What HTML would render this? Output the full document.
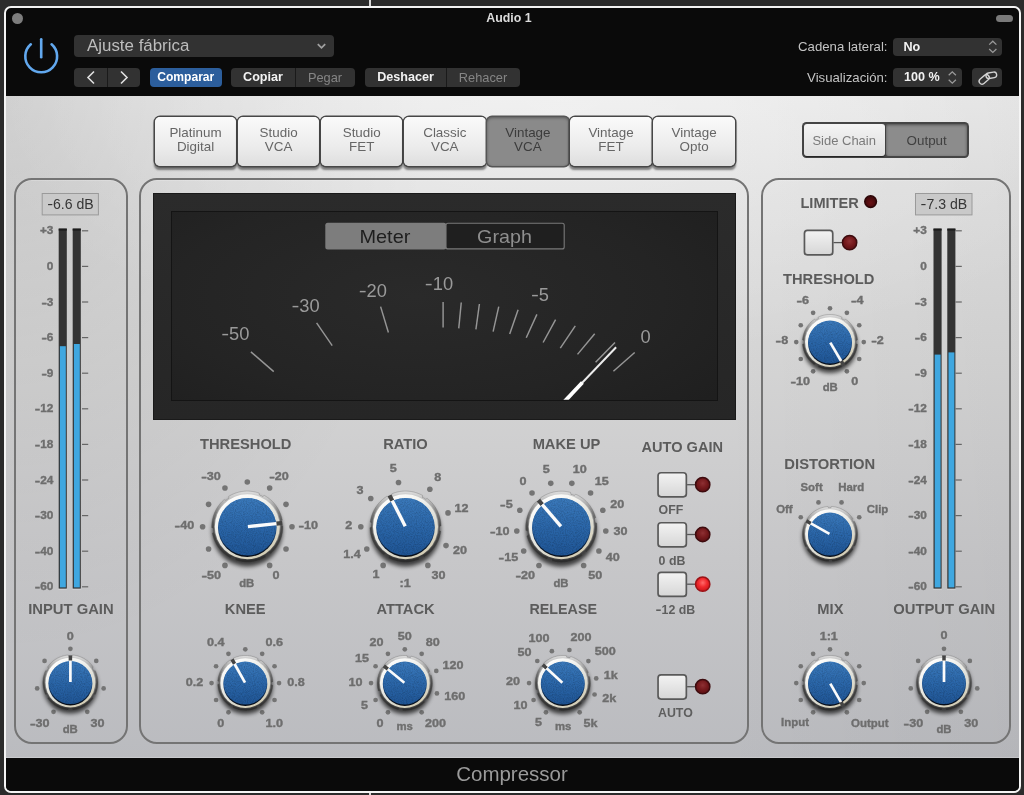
<!DOCTYPE html><html><head><meta charset="utf-8"><title>Compressor</title><style>
html,body{margin:0;padding:0;}
body{will-change:transform;}
svg.abs{will-change:transform;}
body{width:1024px;height:795px;overflow:hidden;background:#2b2b2b;font-family:"Liberation Sans",sans-serif;position:relative;}
.abs{position:absolute;}
#win{position:absolute;left:4px;top:6px;width:1013px;height:783px;border:2px solid #f4f4f4;border-radius:7px;background:#0a0a0a;overflow:hidden;}
#body{position:absolute;left:6px;top:96px;width:1013px;height:661.5px;box-shadow:inset 0 -1px 0 rgba(255,255,255,0.22);background:radial-gradient(ellipse 42% 85% at 0% 0%,rgba(0,0,0,0.11) 0%,rgba(0,0,0,0.05) 45%,rgba(0,0,0,0) 100%),linear-gradient(90deg,rgba(0,0,0,0) 70%,rgba(0,0,0,0.03) 100%),linear-gradient(180deg,#e9e9e9 0%,#e1e1e1 12%,#d5d5d5 40%,#c7c7c9 70%,#babbbf 100%);}
#bodyhl{position:absolute;left:6px;top:96px;width:1013px;height:661.5px;background:radial-gradient(ellipse 60% 40% at 55% 0%,rgba(255,255,255,0.35),rgba(255,255,255,0) 100%);}
.panel{position:absolute;border:2px solid #747474;border-radius:18px;box-sizing:border-box;box-shadow:inset 0 1px 0.5px rgba(255,255,255,0.2);}
.hb{position:absolute;background:#323232;border-radius:4px;color:#9a9a9a;font-size:12.6px;line-height:19px;height:19px;text-align:center;font-weight:bold;}
.tb{position:absolute;top:116.5px;height:49px;width:81.5px;box-sizing:border-box;border-radius:5px;background:linear-gradient(180deg,#fafafa,#ececec 60%,#dedede);color:#666;font-size:13.4px;line-height:14.2px;text-align:center;padding-top:9.3px;box-shadow:0 0 0 1.5px #474747, 0 3px 2px 0.5px rgba(0,0,0,0.45);}
.tb.on{background:#8a8a8a;color:#3c3c3c;box-shadow:0 0 0 1.5px #555, inset 0 1px 3px rgba(0,0,0,0.35);}
</style></head><body>
<div class="abs" style="left:369px;top:0;width:1.5px;height:6px;background:#d8d8d8"></div>
<div class="abs" style="left:369px;top:793px;width:1.5px;height:2px;background:#d8d8d8"></div>
<div id="win"></div>
<div id="body"></div><div id="bodyhl"></div>
<div class="abs" style="left:11.5px;top:12.5px;width:11px;height:11px;border-radius:50%;background:#7d7d7d"></div>
<div class="abs" style="left:995.5px;top:14.5px;width:17.5px;height:7px;border-radius:3.5px;background:#7a7a7a"></div>
<div class="abs" style="left:486px;top:10px;width:46px;text-align:center;color:#dcdcdc;font-size:12.4px;font-weight:bold;line-height:16px;white-space:nowrap">Audio 1</div>
<div class="abs" style="left:74px;top:35px;width:259.5px;height:22px;background:#323232;border-radius:4px;color:#bdbdbd;font-size:16.9px;line-height:22px;"><span style="position:absolute;left:13px;top:0">Ajuste fábrica</span></div>
<div class="hb" style="left:74px;top:68px;width:66px;"></div>
<div class="abs" style="left:106.5px;top:68px;width:1px;height:19px;background:#1a1a1a"></div>
<div class="hb" style="left:150px;top:68px;width:71.5px;background:#2c5e9c;color:#fff;font-size:12.1px">Comparar</div>
<div class="hb" style="left:231px;top:68px;width:124px;"></div>
<div class="hb" style="left:231px;top:68px;width:64px;background:none;color:#f2f2f2;">Copiar</div>
<div class="hb" style="left:295px;top:68px;width:60px;background:none;color:#858585;font-weight:normal;font-size:12.8px">Pegar</div>
<div class="abs" style="left:295px;top:68px;width:1px;height:19px;background:#1a1a1a"></div>
<div class="hb" style="left:365px;top:68px;width:155px;"></div>
<div class="hb" style="left:365px;top:68px;width:81px;background:none;color:#f2f2f2;">Deshacer</div>
<div class="hb" style="left:446px;top:68px;width:74px;background:none;color:#858585;font-weight:normal;font-size:12.8px">Rehacer</div>
<div class="abs" style="left:446px;top:68px;width:1px;height:19px;background:#1a1a1a"></div>
<div class="abs" style="left:760px;top:38px;width:127.5px;text-align:right;color:#c4c4c4;font-size:13.2px;line-height:18px;white-space:nowrap">Cadena lateral:</div>
<div class="abs" style="left:760px;top:68.5px;width:127.5px;text-align:right;color:#c4c4c4;font-size:13.2px;line-height:18px;white-space:nowrap">Visualización:</div>
<div class="hb" style="left:893px;top:37.5px;width:109px;height:18.5px;text-align:left;color:#f2f2f2;"><span style="position:absolute;left:10.5px;top:0">No</span></div>
<div class="hb" style="left:893px;top:68px;width:69px;text-align:left;color:#f2f2f2;"><span style="position:absolute;left:11px;top:0">100 %</span></div>
<div class="hb" style="left:972px;top:68px;width:30px;"></div>
<div class="tb" style="left:154.75px">Platinum<br>Digital</div>
<div class="tb" style="left:237.85px">Studio<br>VCA</div>
<div class="tb" style="left:320.95px">Studio<br>FET</div>
<div class="tb" style="left:404.05px">Classic<br>VCA</div>
<div class="tb on" style="left:487.15px">Vintage<br>VCA</div>
<div class="tb" style="left:570.25px">Vintage<br>FET</div>
<div class="tb" style="left:653.35px">Vintage<br>Opto</div>
<div class="abs" style="left:801.7px;top:122px;width:167.6px;height:36px;border-radius:4.5px;background:#454545;"></div>
<div class="abs" style="left:803.7px;top:124px;width:81px;height:32px;border-radius:3px;background:linear-gradient(180deg,#f4f4f4,#dedede);color:#7a7a7a;font-size:13px;line-height:33px;text-align:center;box-shadow:0 1px 1px rgba(0,0,0,0.5)">Side Chain</div>
<div class="abs" style="left:886px;top:124px;width:81.3px;height:32px;border-radius:2px;background:#8c8c8c;color:#404040;font-size:13.4px;line-height:33px;text-align:center;box-shadow:inset 0 1px 3px rgba(0,0,0,0.45)">Output</div>
<div class="panel" style="left:14px;top:177.7px;width:114px;height:566.5px;"></div>
<div class="panel" style="left:139.3px;top:177.7px;width:609.6px;height:566.5px;"></div>
<div class="panel" style="left:760.7px;top:177.7px;width:250.4px;height:566.5px;"></div>
<div class="abs" style="left:152.8px;top:193px;width:582.8px;height:227.3px;background:linear-gradient(180deg,#2b2b2b,#262626);box-shadow:0 0 0 1px #1a1a1a inset;"></div>
<div class="abs" style="left:171.6px;top:211.6px;width:545.6px;height:188.4px;background:radial-gradient(ellipse 75% 90% at 45% 45%,#2a2a2a 0%,#242424 60%,#1e1e1e 100%);box-shadow:0 0 0 1px #141414;"></div>
<div class="abs" style="left:6px;top:757.5px;width:1013px;height:33.5px;background:#0a0a0a;border-radius:0 0 5px 5px;"></div>
<div class="abs" style="left:412px;top:762px;width:200px;text-align:center;color:#9a9a9a;font-size:20.5px;line-height:24px;">Compressor</div>
<svg class="abs" style="left:0;top:0" width="1024" height="795" viewBox="0 0 1024 795" font-family='"Liberation Sans", sans-serif'>
<defs>
<filter id="blur3" x="-50%" y="-50%" width="200%" height="200%"><feGaussianBlur stdDeviation="2.2"/></filter>
<filter id="grain" x="0" y="0" width="100%" height="100%"><feTurbulence type="fractalNoise" baseFrequency="0.9" numOctaves="2" seed="3" result="n"/><feColorMatrix type="matrix" values="0 0 0 0 0  0 0 0 0 0  0 0 0 0 0  0.6 0 0 0 -0.22" in="n" result="a"/><feComposite in="a" in2="SourceGraphic" operator="in"/></filter>
<linearGradient id="silver" x1="0" y1="0" x2="0" y2="1"><stop offset="0" stop-color="#dedede"/><stop offset="0.12" stop-color="#c2c2c2"/><stop offset="0.3" stop-color="#7a7a7a"/><stop offset="0.5" stop-color="#4a4a4a"/><stop offset="0.8" stop-color="#3a3a3a"/><stop offset="1" stop-color="#2a2a2a"/></linearGradient>
<linearGradient id="silverIn" x1="0" y1="0" x2="0" y2="1"><stop offset="0" stop-color="#cfcfcf"/><stop offset="1" stop-color="#3c3c3c"/></linearGradient>
<linearGradient id="cream" x1="0.2" y1="0" x2="0.8" y2="1"><stop offset="0" stop-color="#ffffff"/><stop offset="0.3" stop-color="#f2f2ee"/><stop offset="0.6" stop-color="#deded6"/><stop offset="1" stop-color="#d2caae"/></linearGradient>
<linearGradient id="blueEdge" x1="0" y1="0" x2="0" y2="1"><stop offset="0" stop-color="#5b9bd8"/><stop offset="0.5" stop-color="#1e4f8a"/><stop offset="0.85" stop-color="#0a1a30"/><stop offset="1" stop-color="#050a14"/></linearGradient>
<linearGradient id="blue" x1="0" y1="0" x2="0" y2="1"><stop offset="0" stop-color="#3b7abc"/><stop offset="0.5" stop-color="#2b67aa"/><stop offset="1" stop-color="#1f5595"/></linearGradient>
<linearGradient id="btn" x1="0" y1="0" x2="0" y2="1"><stop offset="0" stop-color="#f3f3f3"/><stop offset="1" stop-color="#d6d6d6"/></linearGradient>
<radialGradient id="ledOff" cx="0.5" cy="0.4" r="0.6"><stop offset="0" stop-color="#8e3033"/><stop offset="0.55" stop-color="#74191c"/><stop offset="1" stop-color="#5a1013"/></radialGradient>
<radialGradient id="ledDark" cx="0.5" cy="0.6" r="0.6"><stop offset="0" stop-color="#6a1215"/><stop offset="1" stop-color="#3a080a"/></radialGradient>
<radialGradient id="ledOn" cx="0.5" cy="0.4" r="0.6"><stop offset="0" stop-color="#ff6a6a"/><stop offset="0.5" stop-color="#f02a2e"/><stop offset="1" stop-color="#c81418"/></radialGradient>
</defs>
<path d="M30.83,44.35 A15.9,15.9 0 1 0 51.57,44.35" fill="none" stroke="#62a8ee" stroke-width="2.6" stroke-linecap="round"/><line x1="41.2" y1="39.2" x2="41.2" y2="57.2" stroke="#62a8ee" stroke-width="2.6" stroke-linecap="round"/><polyline points="94,71.5 88,77.5 94,83.5" fill="none" stroke="#e0e0e0" stroke-width="1.6"/><polyline points="121,71.5 127,77.5 121,83.5" fill="none" stroke="#e0e0e0" stroke-width="1.6"/><polyline points="317.8,44.2 321.5,47.8 325.2,44.2" fill="none" stroke="#a0a0a0" stroke-width="1.8"/><polyline points="989.1999999999999,44.599999999999994 992.8,41.199999999999996 996.4,44.599999999999994" fill="none" stroke="#9a9a9a" stroke-width="1.3"/><polyline points="989.1999999999999,49.0 992.8,52.4 996.4,49.0" fill="none" stroke="#9a9a9a" stroke-width="1.3"/><polyline points="948.6999999999999,75.3 952.3,71.9 955.9,75.3" fill="none" stroke="#9a9a9a" stroke-width="1.3"/><polyline points="948.6999999999999,79.7 952.3,83.1 955.9,79.7" fill="none" stroke="#9a9a9a" stroke-width="1.3"/><g fill="none" stroke="#d4d4d4" stroke-width="1.35"><rect x="-5.7" y="-2.9" width="11.4" height="5.8" rx="2.9" transform="translate(984.2,79.4) rotate(-40)"/><rect x="-5.4" y="-2.8" width="10.8" height="5.6" rx="2.8" transform="translate(991.3,75.3) rotate(-10)"/></g><line x1="250.9" y1="351.9" x2="273.75" y2="371.6" stroke="#969696" stroke-width="1.45"/>
<line x1="316.6" y1="322.8" x2="332.2" y2="345.6" stroke="#969696" stroke-width="1.45"/>
<line x1="380.6" y1="306.6" x2="388.4" y2="332.5" stroke="#969696" stroke-width="1.45"/>
<line x1="443.1" y1="301.9" x2="443.1" y2="327.5" stroke="#969696" stroke-width="1.45"/>
<line x1="461.25" y1="302.5" x2="458.75" y2="328.4" stroke="#969696" stroke-width="1.45"/>
<line x1="479.4" y1="304" x2="475.9" y2="329.4" stroke="#969696" stroke-width="1.45"/>
<line x1="498.75" y1="306.6" x2="493.1" y2="331.6" stroke="#969696" stroke-width="1.45"/>
<line x1="518.1" y1="309.7" x2="509.7" y2="334" stroke="#969696" stroke-width="1.45"/>
<line x1="536.9" y1="314.4" x2="526.25" y2="337.8" stroke="#969696" stroke-width="1.45"/>
<line x1="555.6" y1="319.7" x2="543.1" y2="342.5" stroke="#969696" stroke-width="1.45"/>
<line x1="575.3" y1="325.9" x2="560.3" y2="348.1" stroke="#969696" stroke-width="1.45"/>
<line x1="594.7" y1="333.75" x2="577.5" y2="354.4" stroke="#969696" stroke-width="1.45"/>
<line x1="615" y1="342.5" x2="595.6" y2="362.2" stroke="#969696" stroke-width="1.45"/>
<line x1="634.7" y1="352.5" x2="613.4" y2="371.25" stroke="#969696" stroke-width="1.45"/>
<clipPath id="scr"><rect x="171.6" y="211.6" width="545.6" height="188.2"/></clipPath>
<g clip-path="url(#scr)"><line x1="616.1" y1="347.2" x2="581.0" y2="384.0" stroke="#ececec" stroke-width="2"/><line x1="582.4" y1="382.5" x2="560" y2="406.3" stroke="#ffffff" stroke-width="3.9"/></g>
<text transform="translate(221.16,340.30) scale(1.0001,1)" font-size="18.3" font-weight="normal" fill="#9a9a9a"><tspan textLength="7.92" lengthAdjust="spacingAndGlyphs">-</tspan>50</text>
<text transform="translate(291.46,311.55) scale(1.0001,1)" font-size="18.3" font-weight="normal" fill="#9a9a9a"><tspan textLength="7.92" lengthAdjust="spacingAndGlyphs">-</tspan>30</text>
<text transform="translate(358.66,296.85) scale(1.0001,1)" font-size="18.3" font-weight="normal" fill="#9a9a9a"><tspan textLength="7.92" lengthAdjust="spacingAndGlyphs">-</tspan>20</text>
<text transform="translate(424.86,289.55) scale(1.0001,1)" font-size="18.3" font-weight="normal" fill="#9a9a9a"><tspan textLength="7.92" lengthAdjust="spacingAndGlyphs">-</tspan>10</text>
<text transform="translate(530.95,301.25) scale(1.0001,1)" font-size="18.3" font-weight="normal" fill="#9a9a9a"><tspan textLength="7.92" lengthAdjust="spacingAndGlyphs">-</tspan>5</text>
<text transform="translate(645.60,342.80) scale(1.0001,1)" font-size="18.3" font-weight="normal" fill="#9a9a9a" text-anchor="middle">0</text>
<rect x="325.3" y="222.8" width="121" height="26.6" rx="2.5" fill="#7d7d7d"/>
<rect x="446" y="223.3" width="118.2" height="25.6" rx="2" fill="#1f1f1f" stroke="#7a7a7a" stroke-width="1.1"/>
<text transform="translate(384.90,242.96) scale(1.07,1)" font-size="18.6" font-weight="normal" fill="#1e1e1e" text-anchor="middle">Meter</text>
<text transform="translate(504.50,242.96) scale(1.06,1)" font-size="18.6" font-weight="normal" fill="#8e8e8e" text-anchor="middle">Graph</text>
<text transform="translate(245.70,449.13) scale(0.952,1)" font-size="15.44" font-weight="bold" fill="#5c5c5c" text-anchor="middle">THRESHOLD</text>
<text transform="translate(405.50,449.13) scale(0.952,1)" font-size="15.44" font-weight="bold" fill="#5c5c5c" text-anchor="middle">RATIO</text>
<text transform="translate(566.50,449.13) scale(0.952,1)" font-size="15.44" font-weight="bold" fill="#5c5c5c" text-anchor="middle">MAKE UP</text>
<text transform="translate(682.30,452.19) scale(0.952,1)" font-size="15.33" font-weight="bold" fill="#5c5c5c" text-anchor="middle">AUTO GAIN</text>
<text transform="translate(245.20,614.13) scale(0.952,1)" font-size="15.44" font-weight="bold" fill="#5c5c5c" text-anchor="middle">KNEE</text>
<text transform="translate(405.50,614.13) scale(0.952,1)" font-size="15.44" font-weight="bold" fill="#5c5c5c" text-anchor="middle">ATTACK</text>
<text transform="translate(563.20,613.98) scale(0.952,1)" font-size="15.02" font-weight="bold" fill="#5c5c5c" text-anchor="middle">RELEASE</text>
<text transform="translate(70.90,614.16) scale(0.952,1)" font-size="15.54" font-weight="bold" fill="#5c5c5c" text-anchor="middle">INPUT GAIN</text>
<text transform="translate(829.60,207.79) scale(0.952,1)" font-size="15.33" font-weight="bold" fill="#5c5c5c" text-anchor="middle">LIMITER</text>
<text transform="translate(828.70,283.93) scale(0.952,1)" font-size="15.44" font-weight="bold" fill="#5c5c5c" text-anchor="middle">THRESHOLD</text>
<text transform="translate(829.80,469.06) scale(0.952,1)" font-size="15.54" font-weight="bold" fill="#5c5c5c" text-anchor="middle">DISTORTION</text>
<text transform="translate(830.40,614.13) scale(0.952,1)" font-size="15.44" font-weight="bold" fill="#5c5c5c" text-anchor="middle">MIX</text>
<text transform="translate(944.20,614.26) scale(0.952,1)" font-size="15.54" font-weight="bold" fill="#5c5c5c" text-anchor="middle">OUTPUT GAIN</text>
<g><circle cx="224.95" cy="565.41" r="2.8" fill="#747474"/><circle cx="208.59" cy="549.05" r="2.8" fill="#747474"/><circle cx="202.60" cy="526.70" r="2.8" fill="#747474"/><circle cx="208.59" cy="504.35" r="2.8" fill="#747474"/><circle cx="224.95" cy="487.99" r="2.8" fill="#747474"/><circle cx="247.30" cy="482.00" r="2.8" fill="#747474"/><circle cx="269.65" cy="487.99" r="2.8" fill="#747474"/><circle cx="286.01" cy="504.35" r="2.8" fill="#747474"/><circle cx="292.00" cy="526.70" r="2.8" fill="#747474"/><circle cx="286.01" cy="549.05" r="2.8" fill="#747474"/><circle cx="269.65" cy="565.41" r="2.8" fill="#747474"/><ellipse cx="247.3" cy="530.97" rx="35.24" ry="35.60" fill="#000" opacity="0.7" filter="url(#blur3)"/><polygon points="247.30,562.30 246.37,562.29 245.44,562.25 244.51,562.19 243.58,562.10 242.65,562.00 241.73,561.86 240.81,561.70 239.90,561.52 238.99,561.32 238.09,561.09 237.19,560.83 236.30,560.56 235.42,560.26 235.19,558.26 234.37,557.93 233.55,557.58 232.75,557.21 231.96,556.82 230.31,557.99 229.50,557.53 228.70,557.05 227.91,556.56 227.14,556.04 226.37,555.50 225.63,554.94 224.90,554.37 224.18,553.77 223.48,553.16 222.79,552.52 222.13,551.87 221.48,551.21 220.84,550.52 220.23,549.82 219.63,549.10 219.06,548.37 218.50,547.63 217.96,546.86 217.44,546.09 216.95,545.30 216.47,544.50 216.01,543.69 215.58,542.86 215.17,542.03 214.78,541.18 214.41,540.32 214.06,539.46 213.74,538.58 213.44,537.70 213.17,536.81 212.91,535.91 212.68,535.01 212.48,534.10 212.30,533.19 213.92,531.99 213.79,531.11 213.69,530.23 213.60,529.35 213.55,528.47 211.71,527.63 211.70,526.70 211.71,525.77 211.75,524.84 211.81,523.91 211.90,522.98 212.00,522.05 212.14,521.13 212.30,520.21 212.48,519.30 212.68,518.39 212.91,517.49 213.17,516.59 213.44,515.70 213.74,514.82 214.06,513.94 214.41,513.08 214.78,512.22 215.17,511.37 215.58,510.54 216.01,509.71 216.47,508.90 216.95,508.10 217.44,507.31 217.96,506.54 218.50,505.77 219.06,505.03 219.63,504.30 220.23,503.58 220.84,502.88 221.48,502.19 222.13,501.53 222.79,500.88 223.48,500.24 224.18,499.63 226.03,500.43 226.72,499.88 227.43,499.36 228.16,498.84 228.89,498.35 228.70,496.35 229.50,495.87 230.31,495.41 231.14,494.98 231.97,494.57 232.82,494.18 233.68,493.81 234.54,493.46 235.42,493.14 236.30,492.84 237.19,492.57 238.09,492.31 238.99,492.08 239.90,491.88 240.81,491.70 241.73,491.54 242.65,491.40 243.58,491.30 244.51,491.21 245.44,491.15 246.37,491.11 247.30,491.10 248.23,491.11 249.16,491.15 250.09,491.21 251.02,491.30 251.95,491.40 252.87,491.54 253.79,491.70 254.70,491.88 255.61,492.08 256.51,492.31 257.41,492.57 258.30,492.84 259.18,493.14 259.41,495.14 260.23,495.47 261.05,495.82 261.85,496.19 262.64,496.58 264.29,495.41 265.10,495.87 265.90,496.35 266.69,496.84 267.46,497.36 268.23,497.90 268.97,498.46 269.70,499.03 270.42,499.63 271.12,500.24 271.81,500.88 272.47,501.53 273.12,502.19 273.76,502.88 274.37,503.58 274.97,504.30 275.54,505.03 276.10,505.77 276.64,506.54 277.16,507.31 277.65,508.10 278.13,508.90 278.59,509.71 279.02,510.54 279.43,511.37 279.82,512.22 280.19,513.08 280.54,513.94 280.86,514.82 281.16,515.70 281.43,516.59 281.69,517.49 281.92,518.39 282.12,519.30 282.30,520.21 280.68,521.41 280.81,522.29 280.91,523.17 281.00,524.05 281.05,524.93 282.89,525.77 282.90,526.70 282.89,527.63 282.85,528.56 282.79,529.49 282.70,530.42 282.60,531.35 282.46,532.27 282.30,533.19 282.12,534.10 281.92,535.01 281.69,535.91 281.43,536.81 281.16,537.70 280.86,538.58 280.54,539.46 280.19,540.32 279.82,541.18 279.43,542.03 279.02,542.86 278.59,543.69 278.13,544.50 277.65,545.30 277.16,546.09 276.64,546.86 276.10,547.63 275.54,548.37 274.97,549.10 274.37,549.82 273.76,550.52 273.12,551.21 272.47,551.87 271.81,552.52 271.12,553.16 270.42,553.77 268.57,552.97 267.88,553.52 267.17,554.04 266.44,554.56 265.71,555.05 265.90,557.05 265.10,557.53 264.29,557.99 263.46,558.42 262.63,558.83 261.78,559.22 260.92,559.59 260.06,559.94 259.18,560.26 258.30,560.56 257.41,560.83 256.51,561.09 255.61,561.32 254.70,561.52 253.79,561.70 252.87,561.86 251.95,562.00 251.02,562.10 250.09,562.19 249.16,562.25 248.23,562.29" fill="url(#silver)" stroke="#4a4a4a" stroke-opacity="0.45" stroke-width="0.6"/><circle cx="247.3" cy="526.7" r="33.40" fill="url(#silverIn)"/><circle cx="247.3" cy="526.7" r="32.50" fill="url(#cream)"/><circle cx="247.3" cy="527.6" r="29.30" fill="url(#blueEdge)"/><circle cx="247.3" cy="526.7" r="28.80" fill="url(#blue)"/><circle cx="247.3" cy="526.7" r="28.80" fill="#000" filter="url(#grain)" opacity="0.6"/><line x1="276.34" y1="523.65" x2="282.31" y2="523.02" stroke="#444" stroke-width="4.2"/><line x1="247.90" y1="526.64" x2="276.34" y2="523.65" stroke="#fbfbfb" stroke-width="3.4"/></g>
<text transform="translate(201.40,578.96) scale(1.2,1)" font-size="10.5" font-weight="bold" fill="#6e6e6e" stroke="#6e6e6e" stroke-width="0.35"><tspan textLength="4.66" lengthAdjust="spacingAndGlyphs">-</tspan>50</text>
<text transform="translate(174.60,528.66) scale(1.2,1)" font-size="10.5" font-weight="bold" fill="#6e6e6e" stroke="#6e6e6e" stroke-width="0.35"><tspan textLength="4.66" lengthAdjust="spacingAndGlyphs">-</tspan>40</text>
<text transform="translate(201.20,479.76) scale(1.2,1)" font-size="10.5" font-weight="bold" fill="#6e6e6e" stroke="#6e6e6e" stroke-width="0.35"><tspan textLength="4.66" lengthAdjust="spacingAndGlyphs">-</tspan>30</text>
<text transform="translate(269.20,479.76) scale(1.2,1)" font-size="10.5" font-weight="bold" fill="#6e6e6e" stroke="#6e6e6e" stroke-width="0.35"><tspan textLength="4.66" lengthAdjust="spacingAndGlyphs">-</tspan>20</text>
<text transform="translate(298.40,528.66) scale(1.2,1)" font-size="10.5" font-weight="bold" fill="#6e6e6e" stroke="#6e6e6e" stroke-width="0.35"><tspan textLength="4.66" lengthAdjust="spacingAndGlyphs">-</tspan>10</text>
<text transform="translate(276.10,578.96) scale(1.2,1)" font-size="10.5" font-weight="bold" fill="#6e6e6e" text-anchor="middle" stroke="#6e6e6e" stroke-width="0.35">0</text>
<text transform="translate(246.70,586.56) scale(1.08,1)" font-size="10.5" font-weight="bold" fill="#6e6e6e" text-anchor="middle" stroke="#6e6e6e" stroke-width="0.35">dB</text>
<g><circle cx="383.15" cy="565.41" r="2.8" fill="#747474"/><circle cx="366.79" cy="549.05" r="2.8" fill="#747474"/><circle cx="360.80" cy="526.70" r="2.8" fill="#747474"/><circle cx="370.76" cy="498.57" r="2.8" fill="#747474"/><circle cx="398.51" cy="482.55" r="2.8" fill="#747474"/><circle cx="429.85" cy="489.21" r="2.8" fill="#747474"/><circle cx="448.01" cy="512.89" r="2.8" fill="#747474"/><circle cx="446.01" cy="545.59" r="2.8" fill="#747474"/><circle cx="427.85" cy="565.41" r="2.8" fill="#747474"/><ellipse cx="405.5" cy="530.97" rx="35.24" ry="35.60" fill="#000" opacity="0.7" filter="url(#blur3)"/><polygon points="405.50,562.30 404.57,562.29 403.64,562.25 402.71,562.19 401.78,562.10 400.85,562.00 399.93,561.86 399.01,561.70 398.10,561.52 397.19,561.32 396.29,561.09 395.39,560.83 394.50,560.56 393.62,560.26 392.74,559.94 391.88,559.59 391.02,559.22 390.17,558.83 389.34,558.42 388.51,557.99 388.60,555.97 387.84,555.52 387.09,555.05 386.36,554.56 385.63,554.04 383.83,554.94 383.10,554.37 382.38,553.77 381.68,553.16 380.99,552.52 380.33,551.87 379.68,551.21 379.04,550.52 378.43,549.82 377.83,549.10 377.26,548.37 376.70,547.63 376.16,546.86 375.64,546.09 375.15,545.30 374.67,544.50 374.21,543.69 373.78,542.86 373.37,542.03 372.98,541.18 372.61,540.32 372.26,539.46 371.94,538.58 371.64,537.70 371.37,536.81 371.11,535.91 370.88,535.01 370.68,534.10 370.50,533.19 370.34,532.27 370.20,531.35 370.10,530.42 370.01,529.49 369.95,528.56 369.91,527.63 371.70,526.70 371.71,525.82 371.75,524.93 371.80,524.05 371.89,523.17 370.20,522.05 370.34,521.13 370.50,520.21 370.68,519.30 370.88,518.39 371.11,517.49 371.37,516.59 371.64,515.70 371.94,514.82 372.26,513.94 372.61,513.08 372.98,512.22 373.37,511.37 373.78,510.54 374.21,509.71 374.67,508.90 375.15,508.10 375.64,507.31 376.16,506.54 376.70,505.77 377.26,505.03 377.83,504.30 378.43,503.58 379.04,502.88 379.68,502.19 380.33,501.53 380.99,500.88 381.68,500.24 382.38,499.63 383.10,499.03 383.83,498.46 384.57,497.90 385.34,497.36 386.11,496.84 386.90,496.35 388.60,497.43 389.37,497.00 390.16,496.58 390.95,496.19 391.75,495.82 391.88,493.81 392.74,493.46 393.62,493.14 394.50,492.84 395.39,492.57 396.29,492.31 397.19,492.08 398.10,491.88 399.01,491.70 399.93,491.54 400.85,491.40 401.78,491.30 402.71,491.21 403.64,491.15 404.57,491.11 405.50,491.10 406.43,491.11 407.36,491.15 408.29,491.21 409.22,491.30 410.15,491.40 411.07,491.54 411.99,491.70 412.90,491.88 413.81,492.08 414.71,492.31 415.61,492.57 416.50,492.84 417.38,493.14 418.26,493.46 419.12,493.81 419.98,494.18 420.83,494.57 421.66,494.98 422.49,495.41 422.40,497.43 423.16,497.88 423.91,498.35 424.64,498.84 425.37,499.36 427.17,498.46 427.90,499.03 428.62,499.63 429.32,500.24 430.01,500.88 430.67,501.53 431.32,502.19 431.96,502.88 432.57,503.58 433.17,504.30 433.74,505.03 434.30,505.77 434.84,506.54 435.36,507.31 435.85,508.10 436.33,508.90 436.79,509.71 437.22,510.54 437.63,511.37 438.02,512.22 438.39,513.08 438.74,513.94 439.06,514.82 439.36,515.70 439.63,516.59 439.89,517.49 440.12,518.39 440.32,519.30 440.50,520.21 440.66,521.13 440.80,522.05 440.90,522.98 440.99,523.91 441.05,524.84 441.09,525.77 439.30,526.70 439.29,527.58 439.25,528.47 439.20,529.35 439.11,530.23 440.80,531.35 440.66,532.27 440.50,533.19 440.32,534.10 440.12,535.01 439.89,535.91 439.63,536.81 439.36,537.70 439.06,538.58 438.74,539.46 438.39,540.32 438.02,541.18 437.63,542.03 437.22,542.86 436.79,543.69 436.33,544.50 435.85,545.30 435.36,546.09 434.84,546.86 434.30,547.63 433.74,548.37 433.17,549.10 432.57,549.82 431.96,550.52 431.32,551.21 430.67,551.87 430.01,552.52 429.32,553.16 428.62,553.77 427.90,554.37 427.17,554.94 426.43,555.50 425.66,556.04 424.89,556.56 424.10,557.05 422.40,555.97 421.63,556.40 420.84,556.82 420.05,557.21 419.25,557.58 419.12,559.59 418.26,559.94 417.38,560.26 416.50,560.56 415.61,560.83 414.71,561.09 413.81,561.32 412.90,561.52 411.99,561.70 411.07,561.86 410.15,562.00 409.22,562.10 408.29,562.19 407.36,562.25 406.43,562.29" fill="url(#silver)" stroke="#4a4a4a" stroke-opacity="0.45" stroke-width="0.6"/><circle cx="405.5" cy="526.7" r="33.40" fill="url(#silverIn)"/><circle cx="405.5" cy="526.7" r="32.50" fill="url(#cream)"/><circle cx="405.5" cy="527.6" r="29.30" fill="url(#blueEdge)"/><circle cx="405.5" cy="526.7" r="28.80" fill="url(#blue)"/><circle cx="405.5" cy="526.7" r="28.80" fill="#000" filter="url(#grain)" opacity="0.6"/><line x1="392.24" y1="500.68" x2="389.52" y2="495.34" stroke="#444" stroke-width="4.2"/><line x1="405.23" y1="526.17" x2="392.24" y2="500.68" stroke="#fbfbfb" stroke-width="3.4"/></g>
<text transform="translate(393.30,472.41) scale(1.2,1)" font-size="10.5" font-weight="bold" fill="#6e6e6e" text-anchor="middle" stroke="#6e6e6e" stroke-width="0.35">5</text>
<text transform="translate(437.80,481.36) scale(1.2,1)" font-size="10.5" font-weight="bold" fill="#6e6e6e" text-anchor="middle" stroke="#6e6e6e" stroke-width="0.35">8</text>
<text transform="translate(360.00,493.66) scale(1.2,1)" font-size="10.5" font-weight="bold" fill="#6e6e6e" text-anchor="middle" stroke="#6e6e6e" stroke-width="0.35">3</text>
<text transform="translate(461.50,512.26) scale(1.2,1)" font-size="10.5" font-weight="bold" fill="#6e6e6e" text-anchor="middle" stroke="#6e6e6e" stroke-width="0.35">12</text>
<text transform="translate(348.75,528.66) scale(1.2,1)" font-size="10.5" font-weight="bold" fill="#6e6e6e" text-anchor="middle" stroke="#6e6e6e" stroke-width="0.35">2</text>
<text transform="translate(460.00,553.66) scale(1.2,1)" font-size="10.5" font-weight="bold" fill="#6e6e6e" text-anchor="middle" stroke="#6e6e6e" stroke-width="0.35">20</text>
<text transform="translate(351.90,557.76) scale(1.2,1)" font-size="10.5" font-weight="bold" fill="#6e6e6e" text-anchor="middle" stroke="#6e6e6e" stroke-width="0.35">1.4</text>
<text transform="translate(376.00,578.26) scale(1.2,1)" font-size="10.5" font-weight="bold" fill="#6e6e6e" text-anchor="middle" stroke="#6e6e6e" stroke-width="0.35">1</text>
<text transform="translate(438.60,578.86) scale(1.2,1)" font-size="10.5" font-weight="bold" fill="#6e6e6e" text-anchor="middle" stroke="#6e6e6e" stroke-width="0.35">30</text>
<text transform="translate(405.20,586.66) scale(1.2,1)" font-size="10.5" font-weight="bold" fill="#6e6e6e" text-anchor="middle" stroke="#6e6e6e" stroke-width="0.35">:1</text>
<g><circle cx="538.95" cy="565.51" r="2.8" fill="#747474"/><circle cx="523.70" cy="550.97" r="2.8" fill="#747474"/><circle cx="516.80" cy="531.05" r="2.8" fill="#747474"/><circle cx="519.80" cy="510.19" r="2.8" fill="#747474"/><circle cx="532.03" cy="493.02" r="2.8" fill="#747474"/><circle cx="550.76" cy="483.36" r="2.8" fill="#747474"/><circle cx="571.84" cy="483.36" r="2.8" fill="#747474"/><circle cx="590.57" cy="493.02" r="2.8" fill="#747474"/><circle cx="602.80" cy="510.19" r="2.8" fill="#747474"/><circle cx="605.80" cy="531.05" r="2.8" fill="#747474"/><circle cx="598.90" cy="550.97" r="2.8" fill="#747474"/><circle cx="583.65" cy="565.51" r="2.8" fill="#747474"/><ellipse cx="561.3" cy="531.07" rx="35.24" ry="35.60" fill="#000" opacity="0.7" filter="url(#blur3)"/><polygon points="561.30,562.40 560.37,562.39 559.44,562.35 558.51,562.29 557.58,562.20 556.65,562.10 555.73,561.96 554.81,561.80 553.90,561.62 552.99,561.42 552.09,561.19 551.70,559.21 550.86,558.95 550.02,558.66 549.19,558.36 548.37,558.03 546.82,559.32 545.97,558.93 545.14,558.52 544.31,558.09 543.50,557.63 542.70,557.15 541.91,556.66 541.14,556.14 540.37,555.60 539.63,555.04 538.90,554.47 538.18,553.87 537.48,553.26 536.79,552.62 536.13,551.97 535.48,551.31 534.84,550.62 534.23,549.92 533.63,549.20 533.06,548.47 532.50,547.73 531.96,546.96 531.44,546.19 530.95,545.40 530.47,544.60 530.01,543.79 529.58,542.96 529.17,542.13 528.78,541.28 528.41,540.42 528.06,539.56 527.74,538.68 527.44,537.80 527.17,536.91 526.91,536.01 528.43,534.69 528.24,533.83 528.07,532.96 527.92,532.09 527.79,531.21 525.90,530.52 525.81,529.59 525.75,528.66 525.71,527.73 525.70,526.80 525.71,525.87 525.75,524.94 525.81,524.01 525.90,523.08 526.00,522.15 526.14,521.23 526.30,520.31 526.48,519.40 526.68,518.49 526.91,517.59 527.17,516.69 527.44,515.80 527.74,514.92 528.06,514.04 528.41,513.18 528.78,512.32 529.17,511.47 529.58,510.64 530.01,509.81 530.47,509.00 530.95,508.20 531.44,507.41 531.96,506.64 532.50,505.87 533.06,505.13 533.63,504.40 534.23,503.68 534.84,502.98 535.48,502.29 536.13,501.63 538.03,502.28 538.68,501.68 539.35,501.10 540.03,500.53 540.72,499.98 540.37,498.00 541.14,497.46 541.91,496.94 542.70,496.45 543.50,495.97 544.31,495.51 545.14,495.08 545.97,494.67 546.82,494.28 547.68,493.91 548.54,493.56 549.42,493.24 550.30,492.94 551.19,492.67 552.09,492.41 552.99,492.18 553.90,491.98 554.81,491.80 555.73,491.64 556.65,491.50 557.58,491.40 558.51,491.31 559.44,491.25 560.37,491.21 561.30,491.20 562.23,491.21 563.16,491.25 564.09,491.31 565.02,491.40 565.95,491.50 566.87,491.64 567.79,491.80 568.70,491.98 569.61,492.18 570.51,492.41 570.90,494.39 571.74,494.65 572.58,494.94 573.41,495.24 574.23,495.57 575.78,494.28 576.63,494.67 577.46,495.08 578.29,495.51 579.10,495.97 579.90,496.45 580.69,496.94 581.46,497.46 582.23,498.00 582.97,498.56 583.70,499.13 584.42,499.73 585.12,500.34 585.81,500.98 586.47,501.63 587.12,502.29 587.76,502.98 588.37,503.68 588.97,504.40 589.54,505.13 590.10,505.87 590.64,506.64 591.16,507.41 591.65,508.20 592.13,509.00 592.59,509.81 593.02,510.64 593.43,511.47 593.82,512.32 594.19,513.18 594.54,514.04 594.86,514.92 595.16,515.80 595.43,516.69 595.69,517.59 594.17,518.91 594.36,519.77 594.53,520.64 594.68,521.51 594.81,522.39 596.70,523.08 596.79,524.01 596.85,524.94 596.89,525.87 596.90,526.80 596.89,527.73 596.85,528.66 596.79,529.59 596.70,530.52 596.60,531.45 596.46,532.37 596.30,533.29 596.12,534.20 595.92,535.11 595.69,536.01 595.43,536.91 595.16,537.80 594.86,538.68 594.54,539.56 594.19,540.42 593.82,541.28 593.43,542.13 593.02,542.96 592.59,543.79 592.13,544.60 591.65,545.40 591.16,546.19 590.64,546.96 590.10,547.73 589.54,548.47 588.97,549.20 588.37,549.92 587.76,550.62 587.12,551.31 586.47,551.97 584.57,551.32 583.92,551.92 583.25,552.50 582.57,553.07 581.88,553.62 582.23,555.60 581.46,556.14 580.69,556.66 579.90,557.15 579.10,557.63 578.29,558.09 577.46,558.52 576.63,558.93 575.78,559.32 574.92,559.69 574.06,560.04 573.18,560.36 572.30,560.66 571.41,560.93 570.51,561.19 569.61,561.42 568.70,561.62 567.79,561.80 566.87,561.96 565.95,562.10 565.02,562.20 564.09,562.29 563.16,562.35 562.23,562.39" fill="url(#silver)" stroke="#4a4a4a" stroke-opacity="0.45" stroke-width="0.6"/><circle cx="561.3" cy="526.8" r="33.40" fill="url(#silverIn)"/><circle cx="561.3" cy="526.8" r="32.50" fill="url(#cream)"/><circle cx="561.3" cy="527.6999999999999" r="29.30" fill="url(#blueEdge)"/><circle cx="561.3" cy="526.8" r="28.80" fill="url(#blue)"/><circle cx="561.3" cy="526.8" r="28.80" fill="#000" filter="url(#grain)" opacity="0.6"/><line x1="542.30" y1="504.63" x2="538.39" y2="500.07" stroke="#444" stroke-width="4.2"/><line x1="560.91" y1="526.34" x2="542.30" y2="504.63" stroke="#fbfbfb" stroke-width="3.4"/></g>
<text transform="translate(546.25,473.46) scale(1.2,1)" font-size="10.5" font-weight="bold" fill="#6e6e6e" text-anchor="middle" stroke="#6e6e6e" stroke-width="0.35">5</text>
<text transform="translate(579.80,473.46) scale(1.2,1)" font-size="10.5" font-weight="bold" fill="#6e6e6e" text-anchor="middle" stroke="#6e6e6e" stroke-width="0.35">10</text>
<text transform="translate(523.00,485.26) scale(1.2,1)" font-size="10.5" font-weight="bold" fill="#6e6e6e" text-anchor="middle" stroke="#6e6e6e" stroke-width="0.35">0</text>
<text transform="translate(601.70,485.26) scale(1.2,1)" font-size="10.5" font-weight="bold" fill="#6e6e6e" text-anchor="middle" stroke="#6e6e6e" stroke-width="0.35">15</text>
<text transform="translate(500.10,508.36) scale(1.2,1)" font-size="10.5" font-weight="bold" fill="#6e6e6e" stroke="#6e6e6e" stroke-width="0.35"><tspan textLength="4.66" lengthAdjust="spacingAndGlyphs">-</tspan>5</text>
<text transform="translate(617.30,508.06) scale(1.2,1)" font-size="10.5" font-weight="bold" fill="#6e6e6e" text-anchor="middle" stroke="#6e6e6e" stroke-width="0.35">20</text>
<text transform="translate(490.00,534.91) scale(1.2,1)" font-size="10.5" font-weight="bold" fill="#6e6e6e" stroke="#6e6e6e" stroke-width="0.35"><tspan textLength="4.66" lengthAdjust="spacingAndGlyphs">-</tspan>10</text>
<text transform="translate(620.60,534.91) scale(1.2,1)" font-size="10.5" font-weight="bold" fill="#6e6e6e" text-anchor="middle" stroke="#6e6e6e" stroke-width="0.35">30</text>
<text transform="translate(498.60,560.96) scale(1.2,1)" font-size="10.5" font-weight="bold" fill="#6e6e6e" stroke="#6e6e6e" stroke-width="0.35"><tspan textLength="4.66" lengthAdjust="spacingAndGlyphs">-</tspan>15</text>
<text transform="translate(612.80,560.56) scale(1.2,1)" font-size="10.5" font-weight="bold" fill="#6e6e6e" text-anchor="middle" stroke="#6e6e6e" stroke-width="0.35">40</text>
<text transform="translate(515.50,578.96) scale(1.2,1)" font-size="10.5" font-weight="bold" fill="#6e6e6e" stroke="#6e6e6e" stroke-width="0.35"><tspan textLength="4.66" lengthAdjust="spacingAndGlyphs">-</tspan>20</text>
<text transform="translate(595.20,578.96) scale(1.2,1)" font-size="10.5" font-weight="bold" fill="#6e6e6e" text-anchor="middle" stroke="#6e6e6e" stroke-width="0.35">50</text>
<text transform="translate(561.00,586.66) scale(1.08,1)" font-size="10.5" font-weight="bold" fill="#6e6e6e" text-anchor="middle" stroke="#6e6e6e" stroke-width="0.35">dB</text>
<g><circle cx="228.43" cy="712.33" r="2.35" fill="#747474"/><circle cx="216.07" cy="699.98" r="2.35" fill="#747474"/><circle cx="211.55" cy="683.10" r="2.35" fill="#747474"/><circle cx="216.07" cy="666.23" r="2.35" fill="#747474"/><circle cx="228.43" cy="653.87" r="2.35" fill="#747474"/><circle cx="245.30" cy="649.35" r="2.35" fill="#747474"/><circle cx="262.18" cy="653.87" r="2.35" fill="#747474"/><circle cx="274.53" cy="666.23" r="2.35" fill="#747474"/><circle cx="279.05" cy="683.10" r="2.35" fill="#747474"/><circle cx="274.53" cy="699.98" r="2.35" fill="#747474"/><circle cx="262.18" cy="712.33" r="2.35" fill="#747474"/><ellipse cx="245.3" cy="686.41" rx="27.32" ry="27.60" fill="#000" opacity="0.7" filter="url(#blur3)"/><polygon points="245.30,710.70 244.58,710.69 243.86,710.66 243.13,710.61 242.42,710.55 241.70,710.46 240.98,710.36 240.27,710.24 239.56,710.10 238.86,709.94 238.16,709.76 237.46,709.56 236.77,709.35 236.09,709.12 235.41,708.87 234.74,708.60 234.07,708.31 233.42,708.01 232.77,707.69 232.99,705.77 232.40,705.44 231.82,705.10 231.25,704.74 229.67,705.85 229.08,705.43 228.50,705.00 227.93,704.55 227.38,704.09 226.83,703.61 226.30,703.12 225.78,702.62 225.28,702.10 224.79,701.57 224.31,701.02 223.85,700.47 223.40,699.90 222.97,699.32 222.55,698.73 222.15,698.13 221.77,697.52 221.40,696.90 221.04,696.27 220.71,695.63 220.39,694.98 220.09,694.33 219.80,693.66 219.53,692.99 219.28,692.31 219.05,691.63 218.84,690.94 218.64,690.24 218.46,689.54 218.30,688.84 218.16,688.13 218.04,687.42 217.94,686.70 217.85,685.98 217.79,685.27 217.74,684.54 219.51,683.78 219.50,683.10 219.51,682.42 219.54,681.75 217.79,680.93 217.85,680.22 217.94,679.50 218.04,678.78 218.16,678.07 218.30,677.36 218.46,676.66 218.64,675.96 218.84,675.26 219.05,674.57 219.28,673.89 219.53,673.21 219.80,672.54 220.09,671.87 220.39,671.22 220.71,670.57 221.04,669.93 221.40,669.30 221.77,668.68 222.15,668.07 222.55,667.47 222.97,666.88 223.40,666.30 223.85,665.73 224.31,665.18 224.79,664.63 225.28,664.10 225.78,663.58 226.30,663.08 226.83,662.59 227.38,662.11 227.93,661.65 228.50,661.20 229.08,660.77 229.67,660.35 230.27,659.95 231.82,661.10 232.40,660.76 232.99,660.43 233.59,660.11 233.42,658.19 234.07,657.89 234.74,657.60 235.41,657.33 236.09,657.08 236.77,656.85 237.46,656.64 238.16,656.44 238.86,656.26 239.56,656.10 240.27,655.96 240.98,655.84 241.70,655.74 242.42,655.65 243.13,655.59 243.86,655.54 244.58,655.51 245.30,655.50 246.02,655.51 246.74,655.54 247.47,655.59 248.18,655.65 248.90,655.74 249.62,655.84 250.33,655.96 251.04,656.10 251.74,656.26 252.44,656.44 253.14,656.64 253.83,656.85 254.51,657.08 255.19,657.33 255.86,657.60 256.53,657.89 257.18,658.19 257.83,658.51 257.61,660.43 258.20,660.76 258.78,661.10 259.35,661.46 260.93,660.35 261.52,660.77 262.10,661.20 262.67,661.65 263.22,662.11 263.77,662.59 264.30,663.08 264.82,663.58 265.32,664.10 265.81,664.63 266.29,665.18 266.75,665.73 267.20,666.30 267.63,666.88 268.05,667.47 268.45,668.07 268.83,668.68 269.20,669.30 269.56,669.93 269.89,670.57 270.21,671.22 270.51,671.87 270.80,672.54 271.07,673.21 271.32,673.89 271.55,674.57 271.76,675.26 271.96,675.96 272.14,676.66 272.30,677.36 272.44,678.07 272.56,678.78 272.66,679.50 272.75,680.22 272.81,680.93 272.86,681.66 271.09,682.42 271.10,683.10 271.09,683.78 271.06,684.45 272.81,685.27 272.75,685.98 272.66,686.70 272.56,687.42 272.44,688.13 272.30,688.84 272.14,689.54 271.96,690.24 271.76,690.94 271.55,691.63 271.32,692.31 271.07,692.99 270.80,693.66 270.51,694.33 270.21,694.98 269.89,695.63 269.56,696.27 269.20,696.90 268.83,697.52 268.45,698.13 268.05,698.73 267.63,699.32 267.20,699.90 266.75,700.47 266.29,701.02 265.81,701.57 265.32,702.10 264.82,702.62 264.30,703.12 263.77,703.61 263.22,704.09 262.67,704.55 262.10,705.00 261.52,705.43 260.93,705.85 260.33,706.25 258.78,705.10 258.20,705.44 257.61,705.77 257.01,706.09 257.18,708.01 256.53,708.31 255.86,708.60 255.19,708.87 254.51,709.12 253.83,709.35 253.14,709.56 252.44,709.76 251.74,709.94 251.04,710.10 250.33,710.24 249.62,710.36 248.90,710.46 248.18,710.55 247.47,710.61 246.74,710.66 246.02,710.69" fill="url(#silver)" stroke="#4a4a4a" stroke-opacity="0.45" stroke-width="0.6"/><circle cx="245.3" cy="683.1" r="25.80" fill="url(#silverIn)"/><circle cx="245.3" cy="683.1" r="24.90" fill="url(#cream)"/><circle cx="245.3" cy="684.0" r="22.00" fill="url(#blueEdge)"/><circle cx="245.3" cy="683.1" r="21.50" fill="url(#blue)"/><circle cx="245.3" cy="683.1" r="21.50" fill="#000" filter="url(#grain)" opacity="0.6"/><line x1="234.62" y1="663.98" x2="232.03" y2="659.36" stroke="#444" stroke-width="3.5"/><line x1="245.01" y1="682.58" x2="234.62" y2="663.98" stroke="#fbfbfb" stroke-width="2.7"/></g>
<text transform="translate(215.80,645.56) scale(1.2,1)" font-size="10.5" font-weight="bold" fill="#6e6e6e" text-anchor="middle" stroke="#6e6e6e" stroke-width="0.35">0.4</text>
<text transform="translate(274.20,645.56) scale(1.2,1)" font-size="10.5" font-weight="bold" fill="#6e6e6e" text-anchor="middle" stroke="#6e6e6e" stroke-width="0.35">0.6</text>
<text transform="translate(194.50,686.46) scale(1.2,1)" font-size="10.5" font-weight="bold" fill="#6e6e6e" text-anchor="middle" stroke="#6e6e6e" stroke-width="0.35">0.2</text>
<text transform="translate(296.10,686.46) scale(1.2,1)" font-size="10.5" font-weight="bold" fill="#6e6e6e" text-anchor="middle" stroke="#6e6e6e" stroke-width="0.35">0.8</text>
<text transform="translate(220.80,726.76) scale(1.2,1)" font-size="10.5" font-weight="bold" fill="#6e6e6e" text-anchor="middle" stroke="#6e6e6e" stroke-width="0.35">0</text>
<text transform="translate(274.20,726.76) scale(1.2,1)" font-size="10.5" font-weight="bold" fill="#6e6e6e" text-anchor="middle" stroke="#6e6e6e" stroke-width="0.35">1.0</text>
<g><circle cx="387.93" cy="712.33" r="2.35" fill="#747474"/><circle cx="375.57" cy="699.98" r="2.35" fill="#747474"/><circle cx="371.05" cy="683.10" r="2.35" fill="#747474"/><circle cx="375.57" cy="666.23" r="2.35" fill="#747474"/><circle cx="387.93" cy="653.87" r="2.35" fill="#747474"/><circle cx="404.80" cy="649.35" r="2.35" fill="#747474"/><circle cx="421.68" cy="653.87" r="2.35" fill="#747474"/><circle cx="436.29" cy="670.95" r="2.35" fill="#747474"/><circle cx="436.92" cy="693.47" r="2.35" fill="#747474"/><circle cx="421.68" cy="712.33" r="2.35" fill="#747474"/><ellipse cx="404.8" cy="686.41" rx="27.32" ry="27.60" fill="#000" opacity="0.7" filter="url(#blur3)"/><polygon points="404.80,710.70 404.08,710.69 403.36,710.66 402.63,710.61 402.10,708.76 401.43,708.68 400.76,708.58 400.10,708.47 399.44,708.34 398.36,709.94 397.66,709.76 396.96,709.56 396.27,709.35 395.59,709.12 394.91,708.87 394.24,708.60 393.57,708.31 392.92,708.01 392.27,707.69 391.63,707.36 391.00,707.00 390.38,706.63 389.77,706.25 389.17,705.85 388.58,705.43 388.00,705.00 387.43,704.55 386.88,704.09 386.33,703.61 385.80,703.12 385.28,702.62 384.78,702.10 384.29,701.57 383.81,701.02 383.35,700.47 382.90,699.90 382.47,699.32 382.05,698.73 381.65,698.13 381.27,697.52 380.90,696.90 380.54,696.27 380.21,695.63 379.89,694.98 381.23,693.59 380.96,692.97 380.71,692.35 380.48,691.71 380.26,691.07 378.34,690.94 378.14,690.24 377.96,689.54 377.80,688.84 377.66,688.13 377.54,687.42 377.44,686.70 377.35,685.98 377.29,685.27 377.24,684.54 377.21,683.82 377.20,683.10 377.21,682.38 377.24,681.66 377.29,680.93 377.35,680.22 377.44,679.50 377.54,678.78 377.66,678.07 377.80,677.36 377.96,676.66 378.14,675.96 378.34,675.26 378.55,674.57 378.78,673.89 379.03,673.21 379.30,672.54 379.59,671.87 379.89,671.22 380.21,670.57 380.54,669.93 380.90,669.30 381.27,668.68 381.65,668.07 382.05,667.47 383.93,667.94 384.33,667.39 384.75,666.86 385.18,666.34 385.63,665.84 384.78,664.10 385.28,663.58 385.80,663.08 386.33,662.59 386.88,662.11 387.43,661.65 388.00,661.20 388.58,660.77 389.17,660.35 389.77,659.95 390.38,659.57 391.00,659.20 391.63,658.84 392.27,658.51 392.92,658.19 393.57,657.89 394.24,657.60 394.91,657.33 395.59,657.08 396.27,656.85 396.96,656.64 397.66,656.44 398.36,656.26 399.06,656.10 399.77,655.96 400.48,655.84 401.20,655.74 401.92,655.65 402.63,655.59 403.36,655.54 404.08,655.51 404.80,655.50 405.52,655.51 406.24,655.54 406.97,655.59 407.50,657.44 408.17,657.52 408.84,657.62 409.50,657.73 410.16,657.86 411.24,656.26 411.94,656.44 412.64,656.64 413.33,656.85 414.01,657.08 414.69,657.33 415.36,657.60 416.03,657.89 416.68,658.19 417.33,658.51 417.97,658.84 418.60,659.20 419.22,659.57 419.83,659.95 420.43,660.35 421.02,660.77 421.60,661.20 422.17,661.65 422.72,662.11 423.27,662.59 423.80,663.08 424.32,663.58 424.82,664.10 425.31,664.63 425.79,665.18 426.25,665.73 426.70,666.30 427.13,666.88 427.55,667.47 427.95,668.07 428.33,668.68 428.70,669.30 429.06,669.93 429.39,670.57 429.71,671.22 428.37,672.61 428.64,673.23 428.89,673.85 429.12,674.49 429.34,675.13 431.26,675.26 431.46,675.96 431.64,676.66 431.80,677.36 431.94,678.07 432.06,678.78 432.16,679.50 432.25,680.22 432.31,680.93 432.36,681.66 432.39,682.38 432.40,683.10 432.39,683.82 432.36,684.54 432.31,685.27 432.25,685.98 432.16,686.70 432.06,687.42 431.94,688.13 431.80,688.84 431.64,689.54 431.46,690.24 431.26,690.94 431.05,691.63 430.82,692.31 430.57,692.99 430.30,693.66 430.01,694.33 429.71,694.98 429.39,695.63 429.06,696.27 428.70,696.90 428.33,697.52 427.95,698.13 427.55,698.73 425.67,698.26 425.27,698.81 424.85,699.34 424.42,699.86 423.97,700.36 424.82,702.10 424.32,702.62 423.80,703.12 423.27,703.61 422.72,704.09 422.17,704.55 421.60,705.00 421.02,705.43 420.43,705.85 419.83,706.25 419.22,706.63 418.60,707.00 417.97,707.36 417.33,707.69 416.68,708.01 416.03,708.31 415.36,708.60 414.69,708.87 414.01,709.12 413.33,709.35 412.64,709.56 411.94,709.76 411.24,709.94 410.54,710.10 409.83,710.24 409.12,710.36 408.40,710.46 407.68,710.55 406.97,710.61 406.24,710.66 405.52,710.69" fill="url(#silver)" stroke="#4a4a4a" stroke-opacity="0.45" stroke-width="0.6"/><circle cx="404.8" cy="683.1" r="25.80" fill="url(#silverIn)"/><circle cx="404.8" cy="683.1" r="24.90" fill="url(#cream)"/><circle cx="404.8" cy="684.0" r="22.00" fill="url(#blueEdge)"/><circle cx="404.8" cy="683.1" r="21.50" fill="url(#blue)"/><circle cx="404.8" cy="683.1" r="21.50" fill="#000" filter="url(#grain)" opacity="0.6"/><line x1="387.90" y1="669.17" x2="383.81" y2="665.80" stroke="#444" stroke-width="3.5"/><line x1="404.34" y1="682.72" x2="387.90" y2="669.17" stroke="#fbfbfb" stroke-width="2.7"/></g>
<text transform="translate(404.70,639.76) scale(1.2,1)" font-size="10.5" font-weight="bold" fill="#6e6e6e" text-anchor="middle" stroke="#6e6e6e" stroke-width="0.35">50</text>
<text transform="translate(376.40,645.86) scale(1.2,1)" font-size="10.5" font-weight="bold" fill="#6e6e6e" text-anchor="middle" stroke="#6e6e6e" stroke-width="0.35">20</text>
<text transform="translate(432.80,645.86) scale(1.2,1)" font-size="10.5" font-weight="bold" fill="#6e6e6e" text-anchor="middle" stroke="#6e6e6e" stroke-width="0.35">80</text>
<text transform="translate(362.00,662.41) scale(1.2,1)" font-size="10.5" font-weight="bold" fill="#6e6e6e" text-anchor="middle" stroke="#6e6e6e" stroke-width="0.35">15</text>
<text transform="translate(453.10,669.46) scale(1.2,1)" font-size="10.5" font-weight="bold" fill="#6e6e6e" text-anchor="middle" stroke="#6e6e6e" stroke-width="0.35">120</text>
<text transform="translate(355.50,686.16) scale(1.2,1)" font-size="10.5" font-weight="bold" fill="#6e6e6e" text-anchor="middle" stroke="#6e6e6e" stroke-width="0.35">10</text>
<text transform="translate(454.70,699.91) scale(1.2,1)" font-size="10.5" font-weight="bold" fill="#6e6e6e" text-anchor="middle" stroke="#6e6e6e" stroke-width="0.35">160</text>
<text transform="translate(364.40,708.86) scale(1.2,1)" font-size="10.5" font-weight="bold" fill="#6e6e6e" text-anchor="middle" stroke="#6e6e6e" stroke-width="0.35">5</text>
<text transform="translate(380.00,726.76) scale(1.2,1)" font-size="10.5" font-weight="bold" fill="#6e6e6e" text-anchor="middle" stroke="#6e6e6e" stroke-width="0.35">0</text>
<text transform="translate(404.70,730.46) scale(1.08,1)" font-size="10.5" font-weight="bold" fill="#6e6e6e" text-anchor="middle" stroke="#6e6e6e" stroke-width="0.35">ms</text>
<text transform="translate(435.50,726.76) scale(1.2,1)" font-size="10.5" font-weight="bold" fill="#6e6e6e" text-anchor="middle" stroke="#6e6e6e" stroke-width="0.35">200</text>
<g><circle cx="545.92" cy="712.33" r="2.35" fill="#747474"/><circle cx="533.57" cy="699.98" r="2.35" fill="#747474"/><circle cx="529.05" cy="683.10" r="2.35" fill="#747474"/><circle cx="537.29" cy="661.00" r="2.35" fill="#747474"/><circle cx="551.87" cy="651.17" r="2.35" fill="#747474"/><circle cx="569.41" cy="650.00" r="2.35" fill="#747474"/><circle cx="588.39" cy="661.09" r="2.35" fill="#747474"/><circle cx="596.22" cy="678.40" r="2.35" fill="#747474"/><circle cx="594.57" cy="694.48" r="2.35" fill="#747474"/><circle cx="579.67" cy="712.33" r="2.35" fill="#747474"/><ellipse cx="562.8" cy="686.41" rx="27.32" ry="27.60" fill="#000" opacity="0.7" filter="url(#blur3)"/><polygon points="562.80,710.70 562.08,710.69 561.36,710.66 560.63,710.61 559.92,710.55 559.20,710.46 558.76,708.58 558.10,708.47 557.44,708.34 556.78,708.19 556.12,708.02 554.96,709.56 554.27,709.35 553.59,709.12 552.91,708.87 552.24,708.60 551.57,708.31 550.92,708.01 550.27,707.69 549.63,707.36 549.00,707.00 548.38,706.63 547.77,706.25 547.17,705.85 546.58,705.43 546.00,705.00 545.43,704.55 544.88,704.09 544.33,703.61 543.80,703.12 543.28,702.62 542.78,702.10 542.29,701.57 541.81,701.02 541.35,700.47 540.90,699.90 540.47,699.32 540.05,698.73 539.65,698.13 539.27,697.52 538.90,696.90 538.54,696.27 538.21,695.63 537.89,694.98 537.59,694.33 537.30,693.66 538.71,692.35 538.48,691.71 538.26,691.07 538.06,690.43 537.88,689.78 535.96,689.54 535.80,688.84 535.66,688.13 535.54,687.42 535.44,686.70 535.35,685.98 535.29,685.27 535.24,684.54 535.21,683.82 535.20,683.10 535.21,682.38 535.24,681.66 535.29,680.93 535.35,680.22 535.44,679.50 535.54,678.78 535.66,678.07 535.80,677.36 535.96,676.66 536.14,675.96 536.34,675.26 536.55,674.57 536.78,673.89 537.03,673.21 537.30,672.54 537.59,671.87 537.89,671.22 538.21,670.57 538.54,669.93 538.90,669.30 539.27,668.68 539.65,668.07 540.05,667.47 540.47,666.88 540.90,666.30 542.75,666.86 543.18,666.34 543.63,665.84 544.09,665.34 544.56,664.86 543.80,663.08 544.33,662.59 544.88,662.11 545.43,661.65 546.00,661.20 546.58,660.77 547.17,660.35 547.77,659.95 548.38,659.57 549.00,659.20 549.63,658.84 550.27,658.51 550.92,658.19 551.57,657.89 552.24,657.60 552.91,657.33 553.59,657.08 554.27,656.85 554.96,656.64 555.66,656.44 556.36,656.26 557.06,656.10 557.77,655.96 558.48,655.84 559.20,655.74 559.92,655.65 560.63,655.59 561.36,655.54 562.08,655.51 562.80,655.50 563.52,655.51 564.24,655.54 564.97,655.59 565.68,655.65 566.40,655.74 566.84,657.62 567.50,657.73 568.16,657.86 568.82,658.01 569.48,658.18 570.64,656.64 571.33,656.85 572.01,657.08 572.69,657.33 573.36,657.60 574.03,657.89 574.68,658.19 575.33,658.51 575.97,658.84 576.60,659.20 577.22,659.57 577.83,659.95 578.43,660.35 579.02,660.77 579.60,661.20 580.17,661.65 580.72,662.11 581.27,662.59 581.80,663.08 582.32,663.58 582.82,664.10 583.31,664.63 583.79,665.18 584.25,665.73 584.70,666.30 585.13,666.88 585.55,667.47 585.95,668.07 586.33,668.68 586.70,669.30 587.06,669.93 587.39,670.57 587.71,671.22 588.01,671.87 588.30,672.54 586.89,673.85 587.12,674.49 587.34,675.13 587.54,675.77 587.72,676.42 589.64,676.66 589.80,677.36 589.94,678.07 590.06,678.78 590.16,679.50 590.25,680.22 590.31,680.93 590.36,681.66 590.39,682.38 590.40,683.10 590.39,683.82 590.36,684.54 590.31,685.27 590.25,685.98 590.16,686.70 590.06,687.42 589.94,688.13 589.80,688.84 589.64,689.54 589.46,690.24 589.26,690.94 589.05,691.63 588.82,692.31 588.57,692.99 588.30,693.66 588.01,694.33 587.71,694.98 587.39,695.63 587.06,696.27 586.70,696.90 586.33,697.52 585.95,698.13 585.55,698.73 585.13,699.32 584.70,699.90 582.85,699.34 582.42,699.86 581.97,700.36 581.51,700.86 581.04,701.34 581.80,703.12 581.27,703.61 580.72,704.09 580.17,704.55 579.60,705.00 579.02,705.43 578.43,705.85 577.83,706.25 577.22,706.63 576.60,707.00 575.97,707.36 575.33,707.69 574.68,708.01 574.03,708.31 573.36,708.60 572.69,708.87 572.01,709.12 571.33,709.35 570.64,709.56 569.94,709.76 569.24,709.94 568.54,710.10 567.83,710.24 567.12,710.36 566.40,710.46 565.68,710.55 564.97,710.61 564.24,710.66 563.52,710.69" fill="url(#silver)" stroke="#4a4a4a" stroke-opacity="0.45" stroke-width="0.6"/><circle cx="562.8" cy="683.1" r="25.80" fill="url(#silverIn)"/><circle cx="562.8" cy="683.1" r="24.90" fill="url(#cream)"/><circle cx="562.8" cy="684.0" r="22.00" fill="url(#blueEdge)"/><circle cx="562.8" cy="683.1" r="21.50" fill="url(#blue)"/><circle cx="562.8" cy="683.1" r="21.50" fill="#000" filter="url(#grain)" opacity="0.6"/><line x1="546.65" y1="668.30" x2="542.75" y2="664.72" stroke="#444" stroke-width="3.5"/><line x1="562.36" y1="682.69" x2="546.65" y2="668.30" stroke="#fbfbfb" stroke-width="2.7"/></g>
<text transform="translate(538.90,641.66) scale(1.2,1)" font-size="10.5" font-weight="bold" fill="#6e6e6e" text-anchor="middle" stroke="#6e6e6e" stroke-width="0.35">100</text>
<text transform="translate(581.10,640.56) scale(1.2,1)" font-size="10.5" font-weight="bold" fill="#6e6e6e" text-anchor="middle" stroke="#6e6e6e" stroke-width="0.35">200</text>
<text transform="translate(524.40,655.66) scale(1.2,1)" font-size="10.5" font-weight="bold" fill="#6e6e6e" text-anchor="middle" stroke="#6e6e6e" stroke-width="0.35">50</text>
<text transform="translate(605.30,655.36) scale(1.2,1)" font-size="10.5" font-weight="bold" fill="#6e6e6e" text-anchor="middle" stroke="#6e6e6e" stroke-width="0.35">500</text>
<text transform="translate(513.10,685.36) scale(1.2,1)" font-size="10.5" font-weight="bold" fill="#6e6e6e" text-anchor="middle" stroke="#6e6e6e" stroke-width="0.35">20</text>
<text transform="translate(610.80,679.16) scale(1.2,1)" font-size="10.5" font-weight="bold" fill="#6e6e6e" text-anchor="middle" stroke="#6e6e6e" stroke-width="0.35">1k</text>
<text transform="translate(520.60,708.86) scale(1.2,1)" font-size="10.5" font-weight="bold" fill="#6e6e6e" text-anchor="middle" stroke="#6e6e6e" stroke-width="0.35">10</text>
<text transform="translate(609.20,701.76) scale(1.2,1)" font-size="10.5" font-weight="bold" fill="#6e6e6e" text-anchor="middle" stroke="#6e6e6e" stroke-width="0.35">2k</text>
<text transform="translate(538.40,725.96) scale(1.2,1)" font-size="10.5" font-weight="bold" fill="#6e6e6e" text-anchor="middle" stroke="#6e6e6e" stroke-width="0.35">5</text>
<text transform="translate(563.10,730.36) scale(1.08,1)" font-size="10.5" font-weight="bold" fill="#6e6e6e" text-anchor="middle" stroke="#6e6e6e" stroke-width="0.35">ms</text>
<text transform="translate(590.50,726.76) scale(1.2,1)" font-size="10.5" font-weight="bold" fill="#6e6e6e" text-anchor="middle" stroke="#6e6e6e" stroke-width="0.35">5k</text>
<g><circle cx="53.53" cy="711.83" r="2.35" fill="#747474"/><circle cx="37.16" cy="688.46" r="2.35" fill="#747474"/><circle cx="44.55" cy="660.91" r="2.35" fill="#747474"/><circle cx="70.40" cy="648.85" r="2.35" fill="#747474"/><circle cx="96.25" cy="660.91" r="2.35" fill="#747474"/><circle cx="103.64" cy="688.46" r="2.35" fill="#747474"/><circle cx="87.28" cy="711.83" r="2.35" fill="#747474"/><ellipse cx="70.4" cy="685.91" rx="27.32" ry="27.60" fill="#000" opacity="0.7" filter="url(#blur3)"/><polygon points="70.40,708.40 69.72,708.39 69.05,708.36 68.23,710.11 67.52,710.05 66.80,709.96 66.08,709.86 65.37,709.74 64.66,709.60 63.96,709.44 63.26,709.26 62.56,709.06 61.87,708.85 61.19,708.62 60.51,708.37 59.84,708.10 59.17,707.81 58.52,707.51 57.87,707.19 57.23,706.86 56.60,706.50 55.98,706.13 55.37,705.75 54.77,705.35 54.18,704.93 53.60,704.50 53.03,704.05 52.48,703.59 51.93,703.11 51.40,702.62 50.88,702.12 50.38,701.60 49.89,701.07 49.41,700.52 48.95,699.97 48.50,699.40 48.07,698.82 47.65,698.23 48.76,696.65 48.40,696.08 48.06,695.50 47.73,694.91 47.41,694.31 45.49,694.48 45.19,693.83 44.90,693.16 44.63,692.49 44.38,691.81 44.15,691.13 43.94,690.44 43.74,689.74 43.56,689.04 43.40,688.34 43.26,687.63 43.14,686.92 43.04,686.20 42.95,685.48 42.89,684.77 42.84,684.04 42.81,683.32 42.80,682.60 42.81,681.88 42.84,681.16 42.89,680.43 42.95,679.72 43.04,679.00 43.14,678.28 43.26,677.57 43.40,676.86 43.56,676.16 43.74,675.46 43.94,674.76 44.15,674.07 44.38,673.39 44.63,672.71 44.90,672.04 45.19,671.37 45.49,670.72 47.41,670.89 47.73,670.29 48.06,669.70 48.40,669.12 48.76,668.55 47.65,666.97 48.07,666.38 48.50,665.80 48.95,665.23 49.41,664.68 49.89,664.13 50.38,663.60 50.88,663.08 51.40,662.58 51.93,662.09 52.48,661.61 53.03,661.15 53.60,660.70 54.18,660.27 54.77,659.85 55.37,659.45 55.98,659.07 56.60,658.70 57.23,658.34 57.87,658.01 58.52,657.69 59.17,657.39 59.84,657.10 60.51,656.83 61.19,656.58 61.87,656.35 62.56,656.14 63.26,655.94 63.96,655.76 64.66,655.60 65.37,655.46 66.08,655.34 66.80,655.24 67.52,655.15 68.23,655.09 69.05,656.84 69.72,656.81 70.40,656.80 71.08,656.81 71.75,656.84 72.57,655.09 73.28,655.15 74.00,655.24 74.72,655.34 75.43,655.46 76.14,655.60 76.84,655.76 77.54,655.94 78.24,656.14 78.93,656.35 79.61,656.58 80.29,656.83 80.96,657.10 81.63,657.39 82.28,657.69 82.93,658.01 83.57,658.34 84.20,658.70 84.82,659.07 85.43,659.45 86.03,659.85 86.62,660.27 87.20,660.70 87.77,661.15 88.32,661.61 88.87,662.09 89.40,662.58 89.92,663.08 90.42,663.60 90.91,664.13 91.39,664.68 91.85,665.23 92.30,665.80 92.73,666.38 93.15,666.97 92.04,668.55 92.40,669.12 92.74,669.70 93.07,670.29 93.39,670.89 95.31,670.72 95.61,671.37 95.90,672.04 96.17,672.71 96.42,673.39 96.65,674.07 96.86,674.76 97.06,675.46 97.24,676.16 97.40,676.86 97.54,677.57 97.66,678.28 97.76,679.00 97.85,679.72 97.91,680.43 97.96,681.16 97.99,681.88 98.00,682.60 97.99,683.32 97.96,684.04 97.91,684.77 97.85,685.48 97.76,686.20 97.66,686.92 97.54,687.63 97.40,688.34 97.24,689.04 97.06,689.74 96.86,690.44 96.65,691.13 96.42,691.81 96.17,692.49 95.90,693.16 95.61,693.83 95.31,694.48 93.39,694.31 93.07,694.91 92.74,695.50 92.40,696.08 92.04,696.65 93.15,698.23 92.73,698.82 92.30,699.40 91.85,699.97 91.39,700.52 90.91,701.07 90.42,701.60 89.92,702.12 89.40,702.62 88.87,703.11 88.32,703.59 87.77,704.05 87.20,704.50 86.62,704.93 86.03,705.35 85.43,705.75 84.82,706.13 84.20,706.50 83.57,706.86 82.93,707.19 82.28,707.51 81.63,707.81 80.96,708.10 80.29,708.37 79.61,708.62 78.93,708.85 78.24,709.06 77.54,709.26 76.84,709.44 76.14,709.60 75.43,709.74 74.72,709.86 74.00,709.96 73.28,710.05 72.57,710.11 71.75,708.36 71.08,708.39" fill="url(#silver)" stroke="#4a4a4a" stroke-opacity="0.45" stroke-width="0.6"/><circle cx="70.4" cy="682.6" r="25.80" fill="url(#silverIn)"/><circle cx="70.4" cy="682.6" r="24.90" fill="url(#cream)"/><circle cx="70.4" cy="683.5" r="22.00" fill="url(#blueEdge)"/><circle cx="70.4" cy="682.6" r="21.50" fill="url(#blue)"/><circle cx="70.4" cy="682.6" r="21.50" fill="#000" filter="url(#grain)" opacity="0.6"/><line x1="70.40" y1="660.70" x2="70.40" y2="655.40" stroke="#444" stroke-width="3.5"/><line x1="70.40" y1="682.00" x2="70.40" y2="660.70" stroke="#fbfbfb" stroke-width="2.7"/></g>
<text transform="translate(70.25,639.56) scale(1.2,1)" font-size="10.5" font-weight="bold" fill="#6e6e6e" text-anchor="middle" stroke="#6e6e6e" stroke-width="0.35">0</text>
<text transform="translate(29.95,726.76) scale(1.2,1)" font-size="10.5" font-weight="bold" fill="#6e6e6e" stroke="#6e6e6e" stroke-width="0.35"><tspan textLength="4.66" lengthAdjust="spacingAndGlyphs">-</tspan>30</text>
<text transform="translate(97.50,726.56) scale(1.2,1)" font-size="10.5" font-weight="bold" fill="#6e6e6e" text-anchor="middle" stroke="#6e6e6e" stroke-width="0.35">30</text>
<text transform="translate(70.25,732.66) scale(1.08,1)" font-size="10.5" font-weight="bold" fill="#6e6e6e" text-anchor="middle" stroke="#6e6e6e" stroke-width="0.35">dB</text>
<g><circle cx="927.12" cy="711.83" r="2.35" fill="#747474"/><circle cx="910.76" cy="688.46" r="2.35" fill="#747474"/><circle cx="918.15" cy="660.91" r="2.35" fill="#747474"/><circle cx="944.00" cy="648.85" r="2.35" fill="#747474"/><circle cx="969.85" cy="660.91" r="2.35" fill="#747474"/><circle cx="977.24" cy="688.46" r="2.35" fill="#747474"/><circle cx="960.88" cy="711.83" r="2.35" fill="#747474"/><ellipse cx="944" cy="685.91" rx="27.32" ry="27.60" fill="#000" opacity="0.7" filter="url(#blur3)"/><polygon points="944.00,708.40 943.32,708.39 942.65,708.36 941.83,710.11 941.12,710.05 940.40,709.96 939.68,709.86 938.97,709.74 938.26,709.60 937.56,709.44 936.86,709.26 936.16,709.06 935.47,708.85 934.79,708.62 934.11,708.37 933.44,708.10 932.77,707.81 932.12,707.51 931.47,707.19 930.83,706.86 930.20,706.50 929.58,706.13 928.97,705.75 928.37,705.35 927.78,704.93 927.20,704.50 926.63,704.05 926.08,703.59 925.53,703.11 925.00,702.62 924.48,702.12 923.98,701.60 923.49,701.07 923.01,700.52 922.55,699.97 922.10,699.40 921.67,698.82 921.25,698.23 922.36,696.65 922.00,696.08 921.66,695.50 921.33,694.91 921.01,694.31 919.09,694.48 918.79,693.83 918.50,693.16 918.23,692.49 917.98,691.81 917.75,691.13 917.54,690.44 917.34,689.74 917.16,689.04 917.00,688.34 916.86,687.63 916.74,686.92 916.64,686.20 916.55,685.48 916.49,684.77 916.44,684.04 916.41,683.32 916.40,682.60 916.41,681.88 916.44,681.16 916.49,680.43 916.55,679.72 916.64,679.00 916.74,678.28 916.86,677.57 917.00,676.86 917.16,676.16 917.34,675.46 917.54,674.76 917.75,674.07 917.98,673.39 918.23,672.71 918.50,672.04 918.79,671.37 919.09,670.72 921.01,670.89 921.33,670.29 921.66,669.70 922.00,669.12 922.36,668.55 921.25,666.97 921.67,666.38 922.10,665.80 922.55,665.23 923.01,664.68 923.49,664.13 923.98,663.60 924.48,663.08 925.00,662.58 925.53,662.09 926.08,661.61 926.63,661.15 927.20,660.70 927.78,660.27 928.37,659.85 928.97,659.45 929.58,659.07 930.20,658.70 930.83,658.34 931.47,658.01 932.12,657.69 932.77,657.39 933.44,657.10 934.11,656.83 934.79,656.58 935.47,656.35 936.16,656.14 936.86,655.94 937.56,655.76 938.26,655.60 938.97,655.46 939.68,655.34 940.40,655.24 941.12,655.15 941.83,655.09 942.65,656.84 943.32,656.81 944.00,656.80 944.68,656.81 945.35,656.84 946.17,655.09 946.88,655.15 947.60,655.24 948.32,655.34 949.03,655.46 949.74,655.60 950.44,655.76 951.14,655.94 951.84,656.14 952.53,656.35 953.21,656.58 953.89,656.83 954.56,657.10 955.23,657.39 955.88,657.69 956.53,658.01 957.17,658.34 957.80,658.70 958.42,659.07 959.03,659.45 959.63,659.85 960.22,660.27 960.80,660.70 961.37,661.15 961.92,661.61 962.47,662.09 963.00,662.58 963.52,663.08 964.02,663.60 964.51,664.13 964.99,664.68 965.45,665.23 965.90,665.80 966.33,666.38 966.75,666.97 965.64,668.55 966.00,669.12 966.34,669.70 966.67,670.29 966.99,670.89 968.91,670.72 969.21,671.37 969.50,672.04 969.77,672.71 970.02,673.39 970.25,674.07 970.46,674.76 970.66,675.46 970.84,676.16 971.00,676.86 971.14,677.57 971.26,678.28 971.36,679.00 971.45,679.72 971.51,680.43 971.56,681.16 971.59,681.88 971.60,682.60 971.59,683.32 971.56,684.04 971.51,684.77 971.45,685.48 971.36,686.20 971.26,686.92 971.14,687.63 971.00,688.34 970.84,689.04 970.66,689.74 970.46,690.44 970.25,691.13 970.02,691.81 969.77,692.49 969.50,693.16 969.21,693.83 968.91,694.48 966.99,694.31 966.67,694.91 966.34,695.50 966.00,696.08 965.64,696.65 966.75,698.23 966.33,698.82 965.90,699.40 965.45,699.97 964.99,700.52 964.51,701.07 964.02,701.60 963.52,702.12 963.00,702.62 962.47,703.11 961.92,703.59 961.37,704.05 960.80,704.50 960.22,704.93 959.63,705.35 959.03,705.75 958.42,706.13 957.80,706.50 957.17,706.86 956.53,707.19 955.88,707.51 955.23,707.81 954.56,708.10 953.89,708.37 953.21,708.62 952.53,708.85 951.84,709.06 951.14,709.26 950.44,709.44 949.74,709.60 949.03,709.74 948.32,709.86 947.60,709.96 946.88,710.05 946.17,710.11 945.35,708.36 944.68,708.39" fill="url(#silver)" stroke="#4a4a4a" stroke-opacity="0.45" stroke-width="0.6"/><circle cx="944" cy="682.6" r="25.80" fill="url(#silverIn)"/><circle cx="944" cy="682.6" r="24.90" fill="url(#cream)"/><circle cx="944" cy="683.5" r="22.00" fill="url(#blueEdge)"/><circle cx="944" cy="682.6" r="21.50" fill="url(#blue)"/><circle cx="944" cy="682.6" r="21.50" fill="#000" filter="url(#grain)" opacity="0.6"/><line x1="944.00" y1="660.70" x2="944.00" y2="655.40" stroke="#444" stroke-width="3.5"/><line x1="944.00" y1="682.00" x2="944.00" y2="660.70" stroke="#fbfbfb" stroke-width="2.7"/></g>
<text transform="translate(944.00,639.46) scale(1.2,1)" font-size="10.5" font-weight="bold" fill="#6e6e6e" text-anchor="middle" stroke="#6e6e6e" stroke-width="0.35">0</text>
<text transform="translate(903.60,726.76) scale(1.2,1)" font-size="10.5" font-weight="bold" fill="#6e6e6e" stroke="#6e6e6e" stroke-width="0.35"><tspan textLength="4.66" lengthAdjust="spacingAndGlyphs">-</tspan>30</text>
<text transform="translate(971.20,726.56) scale(1.2,1)" font-size="10.5" font-weight="bold" fill="#6e6e6e" text-anchor="middle" stroke="#6e6e6e" stroke-width="0.35">30</text>
<text transform="translate(944.00,732.66) scale(1.08,1)" font-size="10.5" font-weight="bold" fill="#6e6e6e" text-anchor="middle" stroke="#6e6e6e" stroke-width="0.35">dB</text>
<g><circle cx="813.12" cy="371.33" r="2.35" fill="#747474"/><circle cx="800.77" cy="358.98" r="2.35" fill="#747474"/><circle cx="796.25" cy="342.10" r="2.35" fill="#747474"/><circle cx="800.77" cy="325.23" r="2.35" fill="#747474"/><circle cx="813.12" cy="312.87" r="2.35" fill="#747474"/><circle cx="830.00" cy="308.35" r="2.35" fill="#747474"/><circle cx="846.88" cy="312.87" r="2.35" fill="#747474"/><circle cx="859.23" cy="325.23" r="2.35" fill="#747474"/><circle cx="863.75" cy="342.10" r="2.35" fill="#747474"/><circle cx="859.23" cy="358.98" r="2.35" fill="#747474"/><circle cx="846.88" cy="371.33" r="2.35" fill="#747474"/><ellipse cx="830" cy="345.41" rx="27.32" ry="27.60" fill="#000" opacity="0.7" filter="url(#blur3)"/><polygon points="830.00,369.70 829.28,369.69 828.56,369.66 827.83,369.61 827.12,369.55 826.40,369.46 825.68,369.36 824.97,369.24 824.26,369.10 823.56,368.94 822.86,368.76 822.16,368.56 821.47,368.35 820.79,368.12 820.11,367.87 819.44,367.60 818.77,367.31 818.12,367.01 818.29,365.09 817.69,364.77 817.10,364.44 816.52,364.10 815.95,363.74 814.37,364.85 813.78,364.43 813.20,364.00 812.63,363.55 812.08,363.09 811.53,362.61 811.00,362.12 810.48,361.62 809.98,361.10 809.49,360.57 809.01,360.02 808.55,359.47 808.10,358.90 807.67,358.32 807.25,357.73 806.85,357.13 806.47,356.52 806.10,355.90 805.74,355.27 805.41,354.63 805.09,353.98 804.79,353.33 804.50,352.66 804.23,351.99 803.98,351.31 803.75,350.63 803.54,349.94 803.34,349.24 803.16,348.54 803.00,347.84 802.86,347.13 802.74,346.42 802.64,345.70 802.55,344.98 802.49,344.27 804.24,343.45 804.21,342.78 804.20,342.10 804.21,341.42 804.24,340.75 802.49,339.93 802.55,339.22 802.64,338.50 802.74,337.78 802.86,337.07 803.00,336.36 803.16,335.66 803.34,334.96 803.54,334.26 803.75,333.57 803.98,332.89 804.23,332.21 804.50,331.54 804.79,330.87 805.09,330.22 805.41,329.57 805.74,328.93 806.10,328.30 806.47,327.68 806.85,327.07 807.25,326.47 807.67,325.88 808.10,325.30 808.55,324.73 809.01,324.18 809.49,323.63 809.98,323.10 810.48,322.58 811.00,322.08 811.53,321.59 812.08,321.11 812.63,320.65 813.20,320.20 813.78,319.77 814.37,319.35 815.95,320.46 816.52,320.10 817.10,319.76 817.69,319.43 818.29,319.11 818.12,317.19 818.77,316.89 819.44,316.60 820.11,316.33 820.79,316.08 821.47,315.85 822.16,315.64 822.86,315.44 823.56,315.26 824.26,315.10 824.97,314.96 825.68,314.84 826.40,314.74 827.12,314.65 827.83,314.59 828.56,314.54 829.28,314.51 830.00,314.50 830.72,314.51 831.44,314.54 832.17,314.59 832.88,314.65 833.60,314.74 834.32,314.84 835.03,314.96 835.74,315.10 836.44,315.26 837.14,315.44 837.84,315.64 838.53,315.85 839.21,316.08 839.89,316.33 840.56,316.60 841.23,316.89 841.88,317.19 841.71,319.11 842.31,319.43 842.90,319.76 843.48,320.10 844.05,320.46 845.63,319.35 846.22,319.77 846.80,320.20 847.37,320.65 847.92,321.11 848.47,321.59 849.00,322.08 849.52,322.58 850.02,323.10 850.51,323.63 850.99,324.18 851.45,324.73 851.90,325.30 852.33,325.88 852.75,326.47 853.15,327.07 853.53,327.68 853.90,328.30 854.26,328.93 854.59,329.57 854.91,330.22 855.21,330.87 855.50,331.54 855.77,332.21 856.02,332.89 856.25,333.57 856.46,334.26 856.66,334.96 856.84,335.66 857.00,336.36 857.14,337.07 857.26,337.78 857.36,338.50 857.45,339.22 857.51,339.93 855.76,340.75 855.79,341.42 855.80,342.10 855.79,342.78 855.76,343.45 857.51,344.27 857.45,344.98 857.36,345.70 857.26,346.42 857.14,347.13 857.00,347.84 856.84,348.54 856.66,349.24 856.46,349.94 856.25,350.63 856.02,351.31 855.77,351.99 855.50,352.66 855.21,353.33 854.91,353.98 854.59,354.63 854.26,355.27 853.90,355.90 853.53,356.52 853.15,357.13 852.75,357.73 852.33,358.32 851.90,358.90 851.45,359.47 850.99,360.02 850.51,360.57 850.02,361.10 849.52,361.62 849.00,362.12 848.47,362.61 847.92,363.09 847.37,363.55 846.80,364.00 846.22,364.43 845.63,364.85 844.05,363.74 843.48,364.10 842.90,364.44 842.31,364.77 841.71,365.09 841.88,367.01 841.23,367.31 840.56,367.60 839.89,367.87 839.21,368.12 838.53,368.35 837.84,368.56 837.14,368.76 836.44,368.94 835.74,369.10 835.03,369.24 834.32,369.36 833.60,369.46 832.88,369.55 832.17,369.61 831.44,369.66 830.72,369.69" fill="url(#silver)" stroke="#4a4a4a" stroke-opacity="0.45" stroke-width="0.6"/><circle cx="830" cy="342.1" r="25.80" fill="url(#silverIn)"/><circle cx="830" cy="342.1" r="24.90" fill="url(#cream)"/><circle cx="830" cy="343.0" r="22.00" fill="url(#blueEdge)"/><circle cx="830" cy="342.1" r="21.50" fill="url(#blue)"/><circle cx="830" cy="342.1" r="21.50" fill="#000" filter="url(#grain)" opacity="0.6"/><line x1="841.12" y1="360.97" x2="843.81" y2="365.54" stroke="#444" stroke-width="3.5"/><line x1="830.30" y1="342.62" x2="841.12" y2="360.97" stroke="#fbfbfb" stroke-width="2.7"/></g>
<text transform="translate(796.45,304.16) scale(1.2,1)" font-size="10.5" font-weight="bold" fill="#6e6e6e" stroke="#6e6e6e" stroke-width="0.35"><tspan textLength="4.66" lengthAdjust="spacingAndGlyphs">-</tspan>6</text>
<text transform="translate(850.95,304.16) scale(1.2,1)" font-size="10.5" font-weight="bold" fill="#6e6e6e" stroke="#6e6e6e" stroke-width="0.35"><tspan textLength="4.66" lengthAdjust="spacingAndGlyphs">-</tspan>4</text>
<text transform="translate(775.60,344.36) scale(1.2,1)" font-size="10.5" font-weight="bold" fill="#6e6e6e" stroke="#6e6e6e" stroke-width="0.35"><tspan textLength="4.66" lengthAdjust="spacingAndGlyphs">-</tspan>8</text>
<text transform="translate(871.20,344.36) scale(1.2,1)" font-size="10.5" font-weight="bold" fill="#6e6e6e" stroke="#6e6e6e" stroke-width="0.35"><tspan textLength="4.66" lengthAdjust="spacingAndGlyphs">-</tspan>2</text>
<text transform="translate(790.45,385.46) scale(1.2,1)" font-size="10.5" font-weight="bold" fill="#6e6e6e" stroke="#6e6e6e" stroke-width="0.35"><tspan textLength="4.66" lengthAdjust="spacingAndGlyphs">-</tspan>10</text>
<text transform="translate(854.75,385.46) scale(1.2,1)" font-size="10.5" font-weight="bold" fill="#6e6e6e" text-anchor="middle" stroke="#6e6e6e" stroke-width="0.35">0</text>
<text transform="translate(830.20,391.36) scale(1.08,1)" font-size="10.5" font-weight="bold" fill="#6e6e6e" text-anchor="middle" stroke="#6e6e6e" stroke-width="0.35">dB</text>
<g><circle cx="800.77" cy="517.23" r="2.35" fill="#747474"/><circle cx="818.46" cy="502.39" r="2.35" fill="#747474"/><circle cx="841.54" cy="502.39" r="2.35" fill="#747474"/><circle cx="859.23" cy="517.23" r="2.35" fill="#747474"/><ellipse cx="830" cy="537.41" rx="27.32" ry="27.60" fill="#000" opacity="0.7" filter="url(#blur3)"/><polygon points="830.00,559.90 829.32,559.89 828.56,561.66 827.83,561.61 827.12,561.55 826.40,561.46 825.68,561.36 824.97,561.24 824.26,561.10 823.56,560.94 822.86,560.76 822.16,560.56 821.47,560.35 820.79,560.12 820.11,559.87 819.44,559.60 818.77,559.31 818.12,559.01 817.47,558.69 816.83,558.36 816.20,558.00 815.58,557.63 814.97,557.25 814.37,556.85 813.78,556.43 813.20,556.00 812.63,555.55 812.08,555.09 811.53,554.61 811.00,554.12 810.48,553.62 809.98,553.10 809.49,552.57 809.01,552.02 808.55,551.47 808.10,550.90 807.67,550.32 807.25,549.73 808.36,548.15 808.00,547.58 807.66,547.00 807.33,546.41 805.41,546.63 805.09,545.98 804.79,545.33 804.50,544.66 804.23,543.99 803.98,543.31 803.75,542.63 803.54,541.94 803.34,541.24 803.16,540.54 803.00,539.84 802.86,539.13 802.74,538.42 802.64,537.70 802.55,536.98 802.49,536.27 802.44,535.54 802.41,534.82 802.40,534.10 802.41,533.38 802.44,532.66 802.49,531.93 802.55,531.22 802.64,530.50 802.74,529.78 802.86,529.07 803.00,528.36 803.16,527.66 803.34,526.96 803.54,526.26 803.75,525.57 803.98,524.89 804.23,524.21 804.50,523.54 804.79,522.87 805.09,522.22 807.01,522.39 807.33,521.79 807.66,521.20 808.00,520.62 806.85,519.07 807.25,518.47 807.67,517.88 808.10,517.30 808.55,516.73 809.01,516.18 809.49,515.63 809.98,515.10 810.48,514.58 811.00,514.08 811.53,513.59 812.08,513.11 812.63,512.65 813.20,512.20 813.78,511.77 814.37,511.35 814.97,510.95 815.58,510.57 816.20,510.20 816.83,509.84 817.47,509.51 818.12,509.19 818.77,508.89 819.44,508.60 820.11,508.33 820.79,508.08 821.47,507.85 822.16,507.64 822.86,507.44 823.56,507.26 824.26,507.10 824.97,506.96 825.68,506.84 826.40,506.74 827.12,506.65 827.83,506.59 828.65,508.34 829.32,508.31 830.00,508.30 830.68,508.31 831.44,506.54 832.17,506.59 832.88,506.65 833.60,506.74 834.32,506.84 835.03,506.96 835.74,507.10 836.44,507.26 837.14,507.44 837.84,507.64 838.53,507.85 839.21,508.08 839.89,508.33 840.56,508.60 841.23,508.89 841.88,509.19 842.53,509.51 843.17,509.84 843.80,510.20 844.42,510.57 845.03,510.95 845.63,511.35 846.22,511.77 846.80,512.20 847.37,512.65 847.92,513.11 848.47,513.59 849.00,514.08 849.52,514.58 850.02,515.10 850.51,515.63 850.99,516.18 851.45,516.73 851.90,517.30 852.33,517.88 852.75,518.47 851.64,520.05 852.00,520.62 852.34,521.20 852.67,521.79 854.59,521.57 854.91,522.22 855.21,522.87 855.50,523.54 855.77,524.21 856.02,524.89 856.25,525.57 856.46,526.26 856.66,526.96 856.84,527.66 857.00,528.36 857.14,529.07 857.26,529.78 857.36,530.50 857.45,531.22 857.51,531.93 857.56,532.66 857.59,533.38 857.60,534.10 857.59,534.82 857.56,535.54 857.51,536.27 857.45,536.98 857.36,537.70 857.26,538.42 857.14,539.13 857.00,539.84 856.84,540.54 856.66,541.24 856.46,541.94 856.25,542.63 856.02,543.31 855.77,543.99 855.50,544.66 855.21,545.33 854.91,545.98 852.99,545.81 852.67,546.41 852.34,547.00 852.00,547.58 853.15,549.13 852.75,549.73 852.33,550.32 851.90,550.90 851.45,551.47 850.99,552.02 850.51,552.57 850.02,553.10 849.52,553.62 849.00,554.12 848.47,554.61 847.92,555.09 847.37,555.55 846.80,556.00 846.22,556.43 845.63,556.85 845.03,557.25 844.42,557.63 843.80,558.00 843.17,558.36 842.53,558.69 841.88,559.01 841.23,559.31 840.56,559.60 839.89,559.87 839.21,560.12 838.53,560.35 837.84,560.56 837.14,560.76 836.44,560.94 835.74,561.10 835.03,561.24 834.32,561.36 833.60,561.46 832.88,561.55 832.17,561.61 831.35,559.86 830.68,559.89" fill="url(#silver)" stroke="#4a4a4a" stroke-opacity="0.45" stroke-width="0.6"/><circle cx="830" cy="534.1" r="25.80" fill="url(#silverIn)"/><circle cx="830" cy="534.1" r="24.90" fill="url(#cream)"/><circle cx="830" cy="535.0" r="22.00" fill="url(#blueEdge)"/><circle cx="830" cy="534.1" r="21.50" fill="url(#blue)"/><circle cx="830" cy="534.1" r="21.50" fill="#000" filter="url(#grain)" opacity="0.6"/><line x1="810.88" y1="523.42" x2="806.26" y2="520.83" stroke="#444" stroke-width="3.5"/><line x1="829.48" y1="533.81" x2="810.88" y2="523.42" stroke="#fbfbfb" stroke-width="2.7"/></g>
<text transform="translate(811.60,491.27) scale(1.06,1)" font-size="10.8" font-weight="bold" fill="#6e6e6e" text-anchor="middle" stroke="#6e6e6e" stroke-width="0.35">Soft</text>
<text transform="translate(851.25,491.27) scale(1.06,1)" font-size="10.8" font-weight="bold" fill="#6e6e6e" text-anchor="middle" stroke="#6e6e6e" stroke-width="0.35">Hard</text>
<text transform="translate(784.40,512.87) scale(1.06,1)" font-size="10.8" font-weight="bold" fill="#6e6e6e" text-anchor="middle" stroke="#6e6e6e" stroke-width="0.35">Off</text>
<text transform="translate(877.50,513.17) scale(1.06,1)" font-size="10.8" font-weight="bold" fill="#6e6e6e" text-anchor="middle" stroke="#6e6e6e" stroke-width="0.35">Clip</text>
<g><circle cx="813.12" cy="712.33" r="2.35" fill="#747474"/><circle cx="800.77" cy="699.98" r="2.35" fill="#747474"/><circle cx="796.25" cy="683.10" r="2.35" fill="#747474"/><circle cx="800.77" cy="666.23" r="2.35" fill="#747474"/><circle cx="813.12" cy="653.87" r="2.35" fill="#747474"/><circle cx="830.00" cy="649.35" r="2.35" fill="#747474"/><circle cx="846.88" cy="653.87" r="2.35" fill="#747474"/><circle cx="859.23" cy="666.23" r="2.35" fill="#747474"/><circle cx="863.75" cy="683.10" r="2.35" fill="#747474"/><circle cx="859.23" cy="699.98" r="2.35" fill="#747474"/><circle cx="846.88" cy="712.33" r="2.35" fill="#747474"/><ellipse cx="830" cy="686.41" rx="27.32" ry="27.60" fill="#000" opacity="0.7" filter="url(#blur3)"/><polygon points="830.00,710.70 829.28,710.69 828.56,710.66 827.83,710.61 827.12,710.55 826.40,710.46 825.68,710.36 824.97,710.24 824.26,710.10 823.56,709.94 822.86,709.76 822.16,709.56 821.47,709.35 820.79,709.12 820.11,708.87 819.44,708.60 818.77,708.31 818.12,708.01 818.29,706.09 817.69,705.77 817.10,705.44 816.52,705.10 815.95,704.74 814.37,705.85 813.78,705.43 813.20,705.00 812.63,704.55 812.08,704.09 811.53,703.61 811.00,703.12 810.48,702.62 809.98,702.10 809.49,701.57 809.01,701.02 808.55,700.47 808.10,699.90 807.67,699.32 807.25,698.73 806.85,698.13 806.47,697.52 806.10,696.90 805.74,696.27 805.41,695.63 805.09,694.98 804.79,694.33 804.50,693.66 804.23,692.99 803.98,692.31 803.75,691.63 803.54,690.94 803.34,690.24 803.16,689.54 803.00,688.84 802.86,688.13 802.74,687.42 802.64,686.70 802.55,685.98 802.49,685.27 804.24,684.45 804.21,683.78 804.20,683.10 804.21,682.42 804.24,681.75 802.49,680.93 802.55,680.22 802.64,679.50 802.74,678.78 802.86,678.07 803.00,677.36 803.16,676.66 803.34,675.96 803.54,675.26 803.75,674.57 803.98,673.89 804.23,673.21 804.50,672.54 804.79,671.87 805.09,671.22 805.41,670.57 805.74,669.93 806.10,669.30 806.47,668.68 806.85,668.07 807.25,667.47 807.67,666.88 808.10,666.30 808.55,665.73 809.01,665.18 809.49,664.63 809.98,664.10 810.48,663.58 811.00,663.08 811.53,662.59 812.08,662.11 812.63,661.65 813.20,661.20 813.78,660.77 814.37,660.35 815.95,661.46 816.52,661.10 817.10,660.76 817.69,660.43 818.29,660.11 818.12,658.19 818.77,657.89 819.44,657.60 820.11,657.33 820.79,657.08 821.47,656.85 822.16,656.64 822.86,656.44 823.56,656.26 824.26,656.10 824.97,655.96 825.68,655.84 826.40,655.74 827.12,655.65 827.83,655.59 828.56,655.54 829.28,655.51 830.00,655.50 830.72,655.51 831.44,655.54 832.17,655.59 832.88,655.65 833.60,655.74 834.32,655.84 835.03,655.96 835.74,656.10 836.44,656.26 837.14,656.44 837.84,656.64 838.53,656.85 839.21,657.08 839.89,657.33 840.56,657.60 841.23,657.89 841.88,658.19 841.71,660.11 842.31,660.43 842.90,660.76 843.48,661.10 844.05,661.46 845.63,660.35 846.22,660.77 846.80,661.20 847.37,661.65 847.92,662.11 848.47,662.59 849.00,663.08 849.52,663.58 850.02,664.10 850.51,664.63 850.99,665.18 851.45,665.73 851.90,666.30 852.33,666.88 852.75,667.47 853.15,668.07 853.53,668.68 853.90,669.30 854.26,669.93 854.59,670.57 854.91,671.22 855.21,671.87 855.50,672.54 855.77,673.21 856.02,673.89 856.25,674.57 856.46,675.26 856.66,675.96 856.84,676.66 857.00,677.36 857.14,678.07 857.26,678.78 857.36,679.50 857.45,680.22 857.51,680.93 855.76,681.75 855.79,682.42 855.80,683.10 855.79,683.78 855.76,684.45 857.51,685.27 857.45,685.98 857.36,686.70 857.26,687.42 857.14,688.13 857.00,688.84 856.84,689.54 856.66,690.24 856.46,690.94 856.25,691.63 856.02,692.31 855.77,692.99 855.50,693.66 855.21,694.33 854.91,694.98 854.59,695.63 854.26,696.27 853.90,696.90 853.53,697.52 853.15,698.13 852.75,698.73 852.33,699.32 851.90,699.90 851.45,700.47 850.99,701.02 850.51,701.57 850.02,702.10 849.52,702.62 849.00,703.12 848.47,703.61 847.92,704.09 847.37,704.55 846.80,705.00 846.22,705.43 845.63,705.85 844.05,704.74 843.48,705.10 842.90,705.44 842.31,705.77 841.71,706.09 841.88,708.01 841.23,708.31 840.56,708.60 839.89,708.87 839.21,709.12 838.53,709.35 837.84,709.56 837.14,709.76 836.44,709.94 835.74,710.10 835.03,710.24 834.32,710.36 833.60,710.46 832.88,710.55 832.17,710.61 831.44,710.66 830.72,710.69" fill="url(#silver)" stroke="#4a4a4a" stroke-opacity="0.45" stroke-width="0.6"/><circle cx="830" cy="683.1" r="25.80" fill="url(#silverIn)"/><circle cx="830" cy="683.1" r="24.90" fill="url(#cream)"/><circle cx="830" cy="684.0" r="22.00" fill="url(#blueEdge)"/><circle cx="830" cy="683.1" r="21.50" fill="url(#blue)"/><circle cx="830" cy="683.1" r="21.50" fill="#000" filter="url(#grain)" opacity="0.6"/><line x1="840.95" y1="702.07" x2="843.60" y2="706.66" stroke="#444" stroke-width="3.5"/><line x1="830.30" y1="683.62" x2="840.95" y2="702.07" stroke="#fbfbfb" stroke-width="2.7"/></g>
<text transform="translate(828.75,639.66) scale(1.2,1)" font-size="10.5" font-weight="bold" fill="#6e6e6e" text-anchor="middle" stroke="#6e6e6e" stroke-width="0.35">1:1</text>
<text transform="translate(795.00,726.07) scale(1.06,1)" font-size="10.8" font-weight="bold" fill="#6e6e6e" text-anchor="middle" stroke="#6e6e6e" stroke-width="0.35">Input</text>
<text transform="translate(869.75,726.67) scale(1.06,1)" font-size="10.8" font-weight="bold" fill="#6e6e6e" text-anchor="middle" stroke="#6e6e6e" stroke-width="0.35">Output</text>
<line x1="687.0999999999999" y1="484.7" x2="702.7" y2="484.7" stroke="#555" stroke-width="1.3"/>
<rect x="658.05" y="472.75" width="28.3" height="24.1" rx="3" fill="url(#btn)" stroke="#595959" stroke-width="1.7"/>
<circle cx="702.7" cy="484.7" r="7.15" fill="url(#ledOff)" stroke="#3d0b0e" stroke-width="1.5"/>
<line x1="687.0999999999999" y1="534.5" x2="702.7" y2="534.5" stroke="#555" stroke-width="1.3"/>
<rect x="658.05" y="522.75" width="28.3" height="24.1" rx="3" fill="url(#btn)" stroke="#595959" stroke-width="1.7"/>
<circle cx="702.7" cy="534.5" r="7.15" fill="url(#ledOff)" stroke="#3d0b0e" stroke-width="1.5"/>
<line x1="687.0999999999999" y1="584.2" x2="702.7" y2="584.2" stroke="#555" stroke-width="1.3"/>
<rect x="658.05" y="572.35" width="28.3" height="24.1" rx="3" fill="url(#btn)" stroke="#595959" stroke-width="1.7"/>
<circle cx="702.7" cy="584.2" r="7.15" fill="url(#ledOn)" stroke="#9a1216" stroke-width="1.5"/>
<line x1="687.0999999999999" y1="686.7" x2="702.7" y2="686.7" stroke="#555" stroke-width="1.3"/>
<rect x="658.05" y="674.95" width="28.3" height="24.1" rx="3" fill="url(#btn)" stroke="#595959" stroke-width="1.7"/>
<circle cx="702.7" cy="686.7" r="7.15" fill="url(#ledOff)" stroke="#3d0b0e" stroke-width="1.5"/>
<text transform="translate(658.60,514.10) scale(1.03,1)" font-size="12" font-weight="bold" fill="#5e5e5e" text-anchor="start">OFF</text>
<text transform="translate(658.60,564.50) scale(1.03,1)" font-size="12" font-weight="bold" fill="#5e5e5e" text-anchor="start">0 dB</text>
<text transform="translate(655.60,614.10) scale(1.03,1)" font-size="12" font-weight="bold" fill="#5e5e5e"><tspan textLength="5.82" lengthAdjust="spacingAndGlyphs">-</tspan>12 dB</text>
<text transform="translate(658.00,717.30) scale(1.03,1)" font-size="12" font-weight="bold" fill="#5e5e5e" text-anchor="start">AUTO</text>
<circle cx="870.6" cy="201.6" r="5.85" fill="url(#ledDark)" stroke="#2c0607" stroke-width="1.5"/>
<line x1="833.5" y1="242.6" x2="849.6" y2="242.6" stroke="#555" stroke-width="1.3"/>
<rect x="804.45" y="230.45" width="28.3" height="24.5" rx="3" fill="url(#btn)" stroke="#595959" stroke-width="1.7"/>
<circle cx="849.6" cy="242.6" r="7.15" fill="url(#ledOff)" stroke="#3d0b0e" stroke-width="1.5"/>
<text transform="translate(53.40,234.35) scale(1.16,1)" font-size="10.2" font-weight="bold" fill="#6e6e6e" text-anchor="end" stroke="#6e6e6e" stroke-width="0.35">+3</text>
<rect x="82.0" y="230.20" width="6.2" height="1.2" fill="#666"/>
<text transform="translate(53.40,269.95) scale(1.16,1)" font-size="10.2" font-weight="bold" fill="#6e6e6e" text-anchor="end" stroke="#6e6e6e" stroke-width="0.35">0</text>
<rect x="82.0" y="265.80" width="6.2" height="1.2" fill="#666"/>
<text transform="translate(41.39,305.55) scale(1.16,1)" font-size="10.2" font-weight="bold" fill="#6e6e6e" stroke="#6e6e6e" stroke-width="0.35"><tspan textLength="4.68" lengthAdjust="spacingAndGlyphs">-</tspan>3</text>
<rect x="82.0" y="301.40" width="6.2" height="1.2" fill="#666"/>
<text transform="translate(41.39,341.15) scale(1.16,1)" font-size="10.2" font-weight="bold" fill="#6e6e6e" stroke="#6e6e6e" stroke-width="0.35"><tspan textLength="4.68" lengthAdjust="spacingAndGlyphs">-</tspan>6</text>
<rect x="82.0" y="337.00" width="6.2" height="1.2" fill="#666"/>
<text transform="translate(41.39,376.75) scale(1.16,1)" font-size="10.2" font-weight="bold" fill="#6e6e6e" stroke="#6e6e6e" stroke-width="0.35"><tspan textLength="4.68" lengthAdjust="spacingAndGlyphs">-</tspan>9</text>
<rect x="82.0" y="372.60" width="6.2" height="1.2" fill="#666"/>
<text transform="translate(34.81,412.35) scale(1.16,1)" font-size="10.2" font-weight="bold" fill="#6e6e6e" stroke="#6e6e6e" stroke-width="0.35"><tspan textLength="4.68" lengthAdjust="spacingAndGlyphs">-</tspan>12</text>
<rect x="82.0" y="408.20" width="6.2" height="1.2" fill="#666"/>
<text transform="translate(34.81,447.95) scale(1.16,1)" font-size="10.2" font-weight="bold" fill="#6e6e6e" stroke="#6e6e6e" stroke-width="0.35"><tspan textLength="4.68" lengthAdjust="spacingAndGlyphs">-</tspan>18</text>
<rect x="82.0" y="443.80" width="6.2" height="1.2" fill="#666"/>
<text transform="translate(34.81,483.55) scale(1.16,1)" font-size="10.2" font-weight="bold" fill="#6e6e6e" stroke="#6e6e6e" stroke-width="0.35"><tspan textLength="4.68" lengthAdjust="spacingAndGlyphs">-</tspan>24</text>
<rect x="82.0" y="479.40" width="6.2" height="1.2" fill="#666"/>
<text transform="translate(34.81,519.15) scale(1.16,1)" font-size="10.2" font-weight="bold" fill="#6e6e6e" stroke="#6e6e6e" stroke-width="0.35"><tspan textLength="4.68" lengthAdjust="spacingAndGlyphs">-</tspan>30</text>
<rect x="82.0" y="515.00" width="6.2" height="1.2" fill="#666"/>
<text transform="translate(34.81,554.75) scale(1.16,1)" font-size="10.2" font-weight="bold" fill="#6e6e6e" stroke="#6e6e6e" stroke-width="0.35"><tspan textLength="4.68" lengthAdjust="spacingAndGlyphs">-</tspan>40</text>
<rect x="82.0" y="550.60" width="6.2" height="1.2" fill="#666"/>
<text transform="translate(34.81,590.35) scale(1.16,1)" font-size="10.2" font-weight="bold" fill="#6e6e6e" stroke="#6e6e6e" stroke-width="0.35"><tspan textLength="4.68" lengthAdjust="spacingAndGlyphs">-</tspan>60</text>
<rect x="82.0" y="586.20" width="6.2" height="1.2" fill="#666"/>
<rect x="58.400000000000006" y="588.4" width="8.7" height="1.2" fill="#fff" opacity="0.35"/>
<rect x="58.7" y="228.6" width="8.1" height="360" fill="#333"/>
<rect x="58.7" y="228.6" width="8.1" height="2" fill="#1c1c1c"/>
<rect x="59.900000000000006" y="346.2" width="5.9" height="241.20" fill="#3fa7e0"/>
<rect x="72.4" y="588.4" width="8.7" height="1.2" fill="#fff" opacity="0.35"/>
<rect x="72.7" y="228.6" width="8.1" height="360" fill="#333"/>
<rect x="72.7" y="228.6" width="8.1" height="2" fill="#1c1c1c"/>
<rect x="73.9" y="344.0" width="5.9" height="243.40" fill="#3fa7e0"/>
<text transform="translate(926.80,234.35) scale(1.16,1)" font-size="10.2" font-weight="bold" fill="#6e6e6e" text-anchor="end" stroke="#6e6e6e" stroke-width="0.35">+3</text>
<rect x="955.6" y="230.20" width="6.2" height="1.2" fill="#666"/>
<text transform="translate(926.80,269.95) scale(1.16,1)" font-size="10.2" font-weight="bold" fill="#6e6e6e" text-anchor="end" stroke="#6e6e6e" stroke-width="0.35">0</text>
<rect x="955.6" y="265.80" width="6.2" height="1.2" fill="#666"/>
<text transform="translate(914.79,305.55) scale(1.16,1)" font-size="10.2" font-weight="bold" fill="#6e6e6e" stroke="#6e6e6e" stroke-width="0.35"><tspan textLength="4.68" lengthAdjust="spacingAndGlyphs">-</tspan>3</text>
<rect x="955.6" y="301.40" width="6.2" height="1.2" fill="#666"/>
<text transform="translate(914.79,341.15) scale(1.16,1)" font-size="10.2" font-weight="bold" fill="#6e6e6e" stroke="#6e6e6e" stroke-width="0.35"><tspan textLength="4.68" lengthAdjust="spacingAndGlyphs">-</tspan>6</text>
<rect x="955.6" y="337.00" width="6.2" height="1.2" fill="#666"/>
<text transform="translate(914.79,376.75) scale(1.16,1)" font-size="10.2" font-weight="bold" fill="#6e6e6e" stroke="#6e6e6e" stroke-width="0.35"><tspan textLength="4.68" lengthAdjust="spacingAndGlyphs">-</tspan>9</text>
<rect x="955.6" y="372.60" width="6.2" height="1.2" fill="#666"/>
<text transform="translate(908.21,412.35) scale(1.16,1)" font-size="10.2" font-weight="bold" fill="#6e6e6e" stroke="#6e6e6e" stroke-width="0.35"><tspan textLength="4.68" lengthAdjust="spacingAndGlyphs">-</tspan>12</text>
<rect x="955.6" y="408.20" width="6.2" height="1.2" fill="#666"/>
<text transform="translate(908.21,447.95) scale(1.16,1)" font-size="10.2" font-weight="bold" fill="#6e6e6e" stroke="#6e6e6e" stroke-width="0.35"><tspan textLength="4.68" lengthAdjust="spacingAndGlyphs">-</tspan>18</text>
<rect x="955.6" y="443.80" width="6.2" height="1.2" fill="#666"/>
<text transform="translate(908.21,483.55) scale(1.16,1)" font-size="10.2" font-weight="bold" fill="#6e6e6e" stroke="#6e6e6e" stroke-width="0.35"><tspan textLength="4.68" lengthAdjust="spacingAndGlyphs">-</tspan>24</text>
<rect x="955.6" y="479.40" width="6.2" height="1.2" fill="#666"/>
<text transform="translate(908.21,519.15) scale(1.16,1)" font-size="10.2" font-weight="bold" fill="#6e6e6e" stroke="#6e6e6e" stroke-width="0.35"><tspan textLength="4.68" lengthAdjust="spacingAndGlyphs">-</tspan>30</text>
<rect x="955.6" y="515.00" width="6.2" height="1.2" fill="#666"/>
<text transform="translate(908.21,554.75) scale(1.16,1)" font-size="10.2" font-weight="bold" fill="#6e6e6e" stroke="#6e6e6e" stroke-width="0.35"><tspan textLength="4.68" lengthAdjust="spacingAndGlyphs">-</tspan>40</text>
<rect x="955.6" y="550.60" width="6.2" height="1.2" fill="#666"/>
<text transform="translate(908.21,590.35) scale(1.16,1)" font-size="10.2" font-weight="bold" fill="#6e6e6e" stroke="#6e6e6e" stroke-width="0.35"><tspan textLength="4.68" lengthAdjust="spacingAndGlyphs">-</tspan>60</text>
<rect x="955.6" y="586.20" width="6.2" height="1.2" fill="#666"/>
<rect x="933.2" y="588.4" width="8.7" height="1.2" fill="#fff" opacity="0.35"/>
<rect x="933.5" y="228.6" width="8.1" height="360" fill="#333"/>
<rect x="933.5" y="228.6" width="8.1" height="2" fill="#1c1c1c"/>
<rect x="934.7" y="354.6" width="5.9" height="232.80" fill="#3fa7e0"/>
<rect x="947.0" y="588.4" width="8.7" height="1.2" fill="#fff" opacity="0.35"/>
<rect x="947.3" y="228.6" width="8.1" height="360" fill="#333"/>
<rect x="947.3" y="228.6" width="8.1" height="2" fill="#1c1c1c"/>
<rect x="948.5" y="352.4" width="5.9" height="235.00" fill="#3fa7e0"/>
<rect x="42.2" y="193.5" width="56.2" height="21.4" fill="#c9c9c9" stroke="#9a9a9a" stroke-width="1"/>
<text transform="translate(47.15,208.65) scale(1,1)" font-size="14.1" font-weight="normal" fill="#363636"><tspan textLength="5.87" lengthAdjust="spacingAndGlyphs">-</tspan>6.6 dB</text>
<rect x="915.5" y="193.5" width="56.5" height="21.4" fill="#c9c9c9" stroke="#9a9a9a" stroke-width="1"/>
<text transform="translate(920.60,208.65) scale(1,1)" font-size="14.1" font-weight="normal" fill="#363636"><tspan textLength="5.87" lengthAdjust="spacingAndGlyphs">-</tspan>7.3 dB</text></svg>
</body></html>
